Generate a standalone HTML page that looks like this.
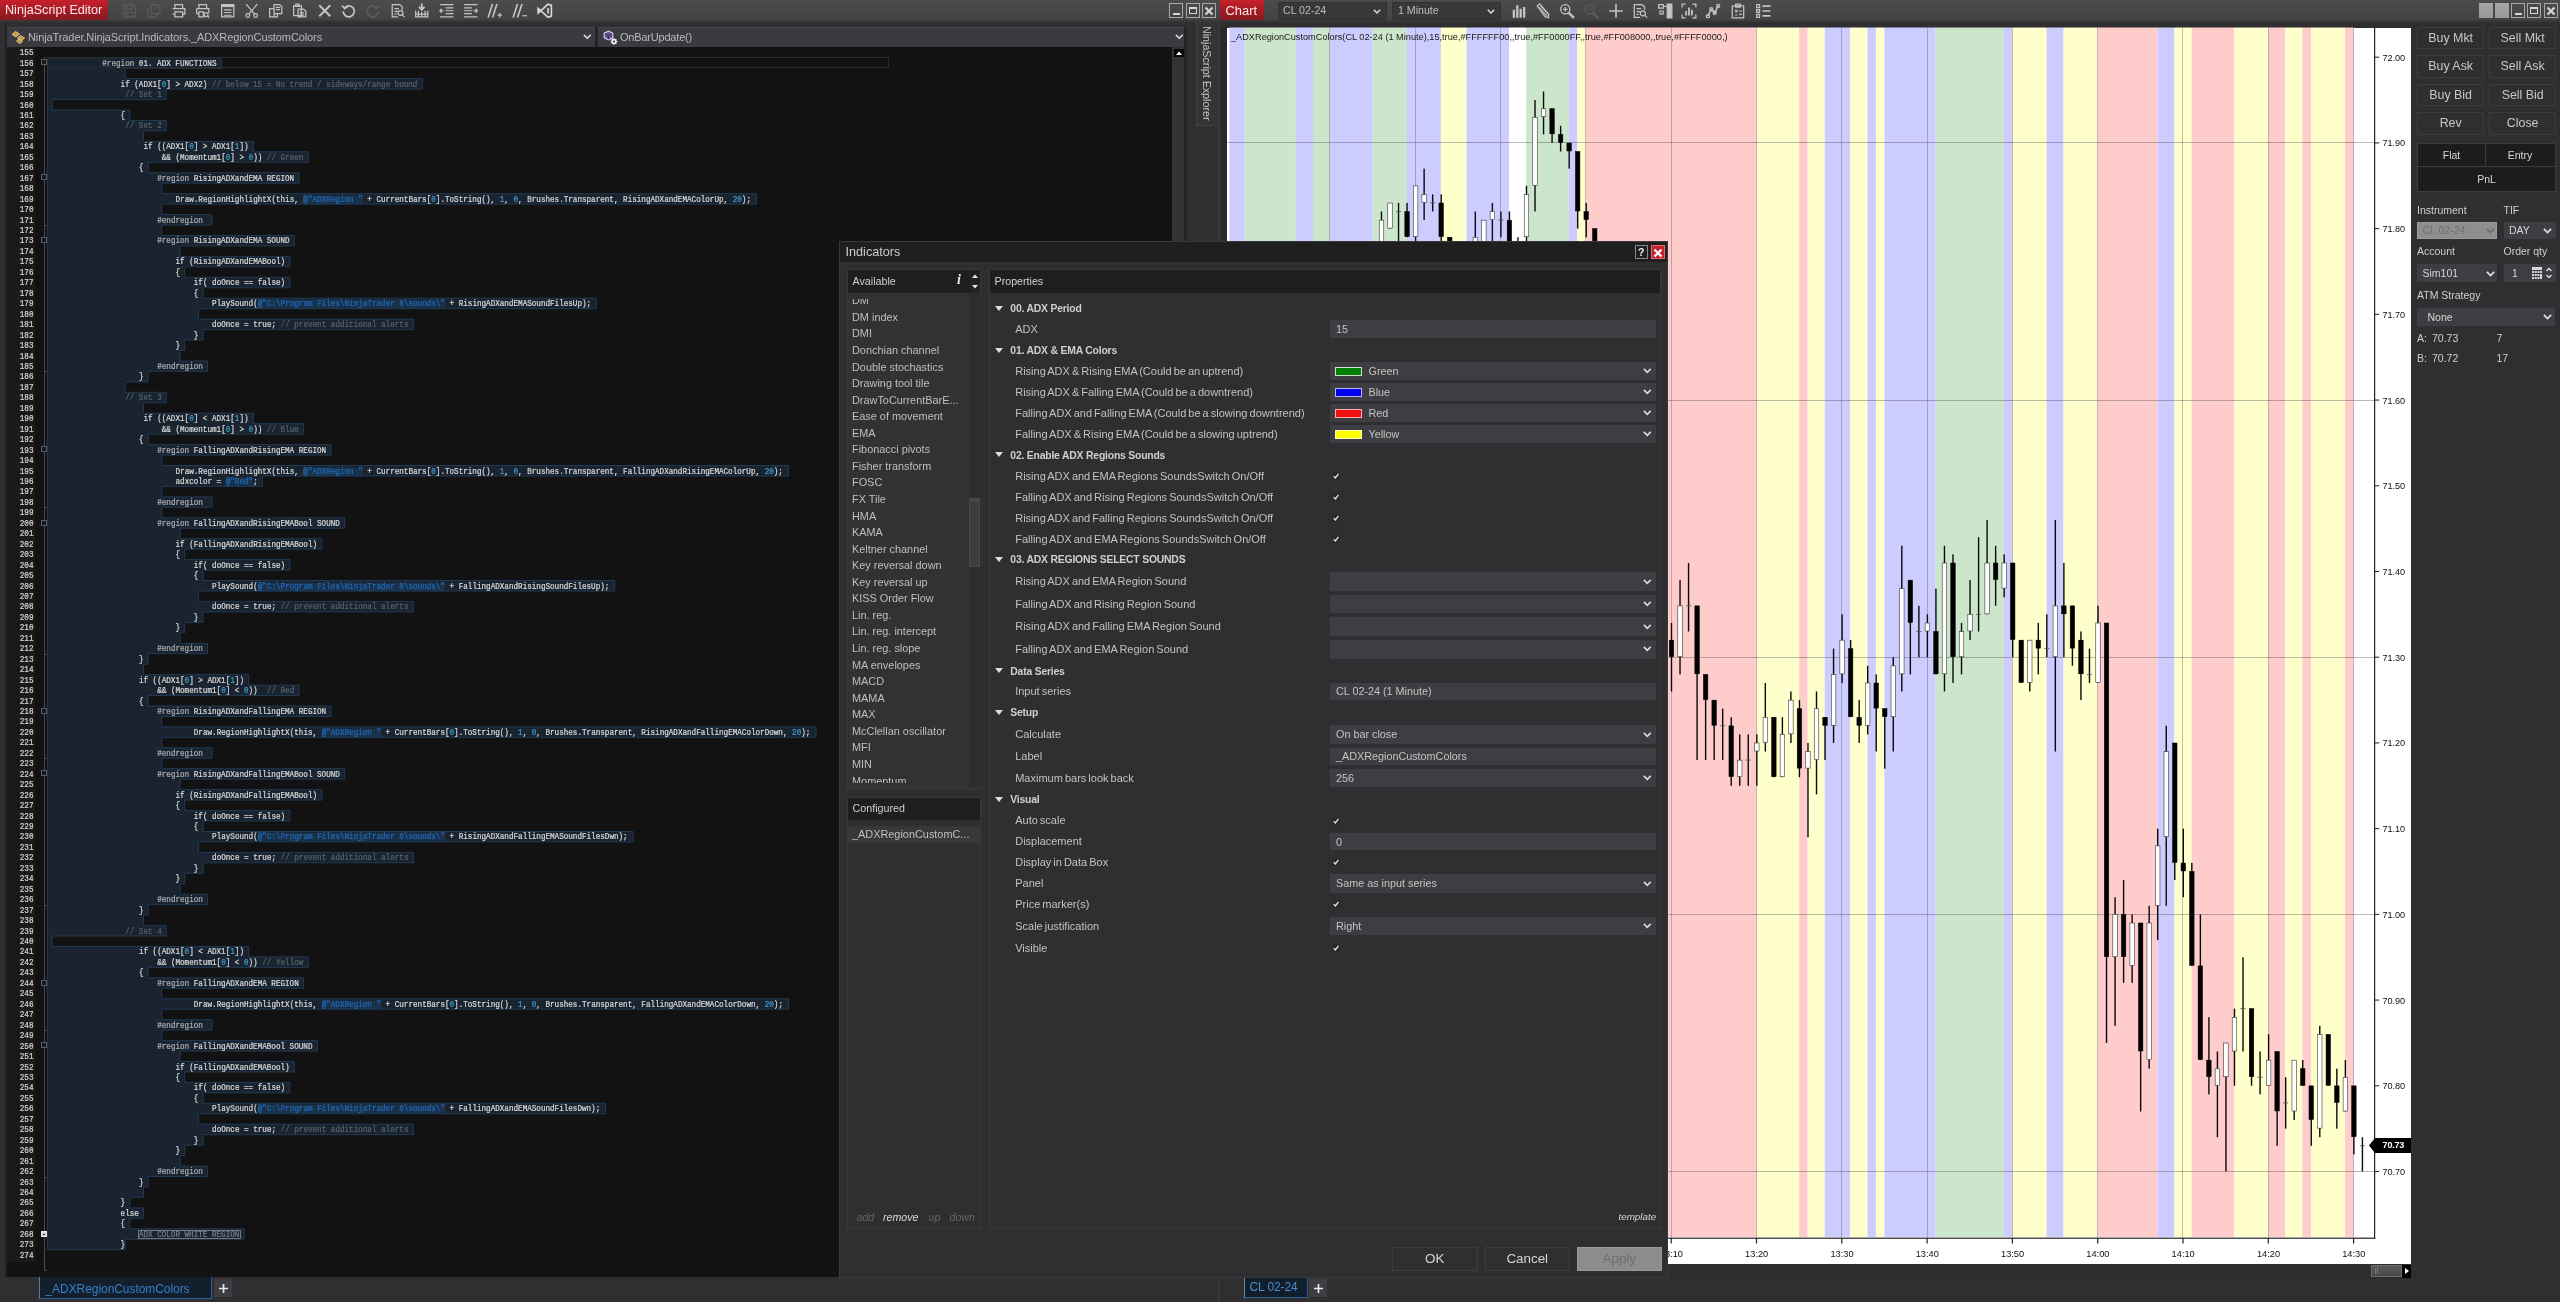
<!DOCTYPE html>
<html><head><meta charset="utf-8"><title>NinjaTrader</title><style>
*{box-sizing:border-box;margin:0;padding:0}
html,body{width:2560px;height:1302px;overflow:hidden;background:#2f2f32}
body{position:relative;font-family:"Liberation Sans",sans-serif;font-size:11px;color:#ccc}
div{position:absolute}
#root{left:0;top:0;width:2560px;height:1302px;will-change:transform;overflow:hidden}
.t{white-space:pre}
svg{position:absolute;overflow:visible}
.code{font-family:"Liberation Mono",monospace;white-space:pre}
.cl{transform:scaleY(1.1);transform-origin:0 50%;-webkit-text-stroke:0.22px currentColor}
</style></head><body>
<div id="root">
<div style="left:0px;top:0px;width:1220px;height:20px;background:linear-gradient(#4c4c4e,#434345);"></div>
<div style="left:0px;top:20px;width:1220px;height:2px;background:#38383a;"></div>
<div style="left:0px;top:22px;width:1220px;height:6px;background:#2f2f32;"></div>
<div style="left:0px;top:0px;width:108px;height:20px;background:linear-gradient(#c8202b,#a81c25 45%,#861922);"></div>
<div class="t" style="left:5px;top:2.00px;height:17px;line-height:17px;font-size:12.6px;color:#ffe9ea;">NinjaScript Editor</div>
<svg style="left:122.25px;top:2.75px" width="15.5" height="15.5" viewBox="0 0 14 14" fill="none" stroke="#5c5c5f" stroke-width="1.1"><path d="M2 1.5h8l2 2v9H2z M4 1.5v4h5v-4 M4 12.5v-4h6v4"/></svg>
<svg style="left:146.25px;top:2.75px" width="15.5" height="15.5" viewBox="0 0 14 14" fill="none" stroke="#5c5c5f" stroke-width="1.1"><path d="M4.5 1.5h6l2 2v6h-8z M1.5 5v7.5h8V10"/></svg>
<svg style="left:171.25px;top:2.75px" width="15.5" height="15.5" viewBox="0 0 14 14" fill="none" stroke="#c4c4c4" stroke-width="1.1"><path d="M3.5 5V1.5h7V5 M1.5 5h11v5h-2 M3.5 10h-2 M3.5 8h7v4.5h-7z"/></svg>
<svg style="left:195.25px;top:2.75px" width="15.5" height="15.5" viewBox="0 0 14 14" fill="none" stroke="#c4c4c4" stroke-width="1.1"><path d="M3.5 5V1.5h7V5 M1.5 5h11v4 M3.5 9.5h-2V5 M3.5 8h4v4.5h-4z"/><circle cx="10" cy="10.5" r="1.8"/><path d="M11.3 11.8l1.5 1.5"/></svg>
<svg style="left:220.25px;top:2.75px" width="15.5" height="15.5" viewBox="0 0 14 14" fill="none" stroke="#c4c4c4" stroke-width="1.1"><path d="M1.5 1.5h11v11h-11z"/><path d="M1.5 2.7h11" stroke-width="2"/><path d="M3.6 6.2h6.800 M3.600 8.600h6.800 M3.600 11h6.800" stroke-width=".95"/></svg>
<svg style="left:244.25px;top:2.75px" width="15.5" height="15.5" viewBox="0 0 14 14" fill="none" stroke="#c4c4c4" stroke-width="1.1"><path d="M2 1l7.5 9 M12 1L4.5 10"/><circle cx="3.5" cy="11.3" r="1.7"/><circle cx="10.5" cy="11.3" r="1.7"/></svg>
<svg style="left:268.25px;top:2.75px" width="15.5" height="15.5" viewBox="0 0 14 14" fill="none" stroke="#c4c4c4" stroke-width="1.1"><path d="M5.5 1.5h5l2 2v6h-7z M1.5 5h4v7.5h-4z M1.5 12.5h7v-3 M7 4h4 M7 6h4"/></svg>
<svg style="left:292.25px;top:2.75px" width="15.5" height="15.5" viewBox="0 0 14 14" fill="none" stroke="#c4c4c4" stroke-width="1.1"><path d="M1.5 2.5h7v9h-7z M3.5 1h3v2h-3z M5.5 5.5h5l2 2v5h-7z M7 9h4 M7 11h4"/></svg>
<svg style="left:317.25px;top:2.75px" width="15.5" height="15.5" viewBox="0 0 14 14" fill="none" stroke="#c4c4c4" stroke-width="1.1"><path d="M2 2l10 10 M12 2L2 12" stroke-width="1.8"/></svg>
<svg style="left:341.25px;top:2.75px" width="15.5" height="15.5" viewBox="0 0 14 14" fill="none" stroke="#c4c4c4" stroke-width="1.1"><path d="M3 4.5A5 5 0 1 1 2 7.5" stroke-width="1.6"/><path d="M0.8 2.2L3.3 5.2 6 3.2" stroke-width="1.4"/></svg>
<svg style="left:365.25px;top:2.75px" width="15.5" height="15.5" viewBox="0 0 14 14" fill="none" stroke="#5c5c5f" stroke-width="1.1"><path d="M11 4.5A5 5 0 1 0 12 7.5" stroke-width="1.6"/><path d="M13.2 2.2L10.7 5.2 8 3.2" stroke-width="1.4"/></svg>
<svg style="left:390.25px;top:2.75px" width="15.5" height="15.5" viewBox="0 0 14 14" fill="none" stroke="#c4c4c4" stroke-width="1.1"><path d="M9 1.5H2v11h5 M9 1.5l2 2V6 M4 5h4 M4 7.5h3 M4 10h2"/><circle cx="9.5" cy="9" r="2.2"/><path d="M11.2 10.8l2 2"/></svg>
<svg style="left:414.25px;top:2.75px" width="15.5" height="15.5" viewBox="0 0 14 14" fill="none" stroke="#c4c4c4" stroke-width="1.1"><path d="M7 0.5v5 M4.5 3.5L7 6l2.5-2.5" stroke-width="1.6"/><path d="M1.5 7v5.5h11V7 M4 7v5.5 M7 8v4.5 M10 7v5.5 M1.5 10h11"/></svg>
<svg style="left:439.25px;top:2.75px" width="15.5" height="15.5" viewBox="0 0 14 14" fill="none" stroke="#c4c4c4" stroke-width="1.1"><path d="M1 1.5h12 M6 4.5h7 M6 7h7 M6 9.5h7 M1 12.5h12 M4.5 7H1 M2.5 5.2L.8 7l1.7 1.8"/></svg>
<svg style="left:463.25px;top:2.75px" width="15.5" height="15.5" viewBox="0 0 14 14" fill="none" stroke="#c4c4c4" stroke-width="1.1"><path d="M1 1.5h12 M1 4.5h7 M1 7h7 M1 9.5h7 M1 12.5h12 M9 7h4 M11.3 5.2L13 7l-1.7 1.8"/></svg>
<svg style="left:487.25px;top:2.75px" width="15.5" height="15.5" viewBox="0 0 14 14" fill="none" stroke="#c4c4c4" stroke-width="1.1"><path d="M5 1L1 13 M9 1L5 13" stroke-width="1.5"/><path d="M9.5 11h4 M11.5 9v4" stroke-width="1.1"/></svg>
<svg style="left:512.25px;top:2.75px" width="15.5" height="15.5" viewBox="0 0 14 14" fill="none" stroke="#c4c4c4" stroke-width="1.1"><path d="M5 1L1 13 M9 1L5 13" stroke-width="1.5"/><path d="M9.5 11.5h4" stroke-width="1.1"/></svg>
<svg style="left:537.25px;top:2.75px" width="15.5" height="15.5" viewBox="0 0 14 14" fill="none" stroke="#d8d8d8" stroke-width="1.1"><path d="M10 1L3.5 7 10 13l3-1.2V2.2z M3.5 7L1 5v4z M10 4.5v5" stroke-width="1.5"/></svg>
<div style="left:1169px;top:3px;width:14px;height:15px;border:1px solid #a8a8aa;"><div style="left:3px;top:9px;width:7px;height:2px;background:#d6d6d6"></div></div>
<div style="left:1185.5px;top:3px;width:14px;height:15px;border:1px solid #a8a8aa;"><div style="left:2px;top:3px;width:8px;height:7px;border:1px solid #d6d6d6;border-top-width:2px"></div></div>
<div style="left:1202px;top:3px;width:14px;height:15px;border:1px solid #a8a8aa;"><svg style="left:2px;top:3px" width="8" height="8" viewBox="0 0 8 8"><path d="M.5 .5l7 7M7.5 .5l-7 7" stroke="#d6d6d6" stroke-width="2.2"/></svg></div>
<div style="left:5px;top:27.3px;width:589.5px;height:19.4px;background:#3b3b3f;border-top:1px solid #46464a"></div>
<div style="left:598px;top:27.3px;width:588px;height:19.4px;background:#3b3b3f;border-top:1px solid #46464a"></div>
<div style="left:594.5px;top:27.3px;width:3.5px;height:19.4px;background:#252528;"></div>
<div class="t" style="left:28px;top:30.10px;height:15px;line-height:15px;font-size:11px;color:#b8b8ba;letter-spacing:-0.1px">NinjaTrader.NinjaScript.Indicators._ADXRegionCustomColors</div>
<div class="t" style="left:620px;top:30.10px;height:15px;line-height:15px;font-size:11px;color:#b8b8ba;letter-spacing:-0.2px">OnBarUpdate()</div>
<svg style="left:582.5px;top:34.3px" width="8.5" height="5.5" viewBox="0 0 10 6.5" fill="none" stroke="#d8d8d8" stroke-width="1.9"><path d="M1 1l4 4 4-4"/></svg>
<svg style="left:1174.5px;top:34.3px" width="8.5" height="5.5" viewBox="0 0 10 6.5" fill="none" stroke="#d8d8d8" stroke-width="1.9"><path d="M1 1l4 4 4-4"/></svg>
<svg style="left:11px;top:30px" width="15" height="15" viewBox="0 0 15 15"><path d="M1 4.5l3.5-3 4 2.5-3.5 3z" fill="#c9973a" stroke="#f0d9a0" stroke-width=".8"/><path d="M6.5 8l3-2.5 4 2.5-3 2.5z" fill="#c9973a" stroke="#f0d9a0" stroke-width=".8"/><path d="M5.5 11l2.5-2 3.5 2.2-2.5 2.3z" fill="#c9973a" stroke="#f0d9a0" stroke-width=".8"/></svg>
<svg style="left:603px;top:29.5px" width="15" height="15" viewBox="0 0 15 15"><path d="M5.5 1l4.3 2.2v4.6L5.5 10 1.200 7.800V3.200z" fill="#66509a" stroke="#dccdf2" stroke-width="1.1"/><path d="M5.500 5.600V9.300M5.500 5.600L2 3.800M5.500 5.600L9 3.800" stroke="#3a2d5c" stroke-width=".9" fill="none"/><path d="M11 7.800l.9 1.300 1.600-.1-.1 1.600 1.300.9-1.300.9.1 1.600-1.600-.1-.9 1.300-.9-1.300-1.600.1.100-1.600-1.300-.9 1.300-.9-.1-1.600 1.600.1z" fill="#ececec"/><circle cx="11" cy="11.500" r="1.100" fill="#3b3b3f"/></svg>
<div style="left:6.9px;top:46.7px;width:1165.1px;height:1230.3px;background:#121212;"></div>
<div style="left:6.9px;top:46.7px;width:28.1px;height:1215.1px;background:#1a1a1a;"></div>
<div style="left:43.5px;top:57px;width:1px;height:1195px;background:#484b4e;"></div>
<div style="left:1172px;top:46.7px;width:12.3px;height:1230.3px;background:#333335;"></div>
<div style="left:1184.3px;top:27px;width:2.6px;height:1250px;background:#242426;"></div>
<div style="left:4.6px;top:22px;width:2.3px;height:1258px;background:#222224;"></div>
<div style="left:1173.5px;top:48.5px;width:10.5px;height:8px;background:#050505;"></div>
<svg style="left:1176px;top:50.5px" width="6" height="4" viewBox="0 0 6 4"><path d="M0 4L3 .5 6 4z" fill="#fff"/></svg>
<div style="left:1196.4px;top:22px;width:23.2px;height:103.6px;background:#343437;border:1px solid #414145;border-top:none"></div>
<div class="t" style="left:1206.5px;top:26px;font-size:10.7px;color:#c8c8c8;transform-origin:0 0;transform:rotate(90deg) translate(0,-50%);line-height:14px;height:14px">NinjaScript Explorer</div>
<svg style="left:0;top:0" width="1172" height="1280"><polygon points="47.4,57.7 221.2,57.7 221.2,68.2 125.2,68.2 125.2,78.6 422.6,78.6 422.6,89.1 166.3,89.1 166.3,99.6 52.0,99.6 52.0,110.0 129.8,110.0 129.8,120.5 166.3,120.5 166.3,130.9 143.5,130.9 143.5,141.4 253.3,141.4 253.3,151.8 308.2,151.8 308.2,162.3 148.1,162.3 148.1,172.7 299.0,172.7 299.0,183.2 161.8,183.2 161.8,193.7 756.5,193.7 756.5,204.1 161.8,204.1 161.8,214.6 212.1,214.6 212.1,225.0 161.8,225.0 161.8,235.5 294.4,235.5 294.4,245.9 180.1,245.9 180.1,256.4 289.9,256.4 289.9,266.8 184.7,266.8 184.7,277.3 289.9,277.3 289.9,287.8 203.0,287.8 203.0,298.2 596.4,298.2 596.4,308.7 198.4,308.7 198.4,319.1 413.4,319.1 413.4,329.6 203.0,329.6 203.0,340.0 184.7,340.0 184.7,350.5 180.1,350.5 180.1,361.0 207.5,361.0 207.5,371.4 148.1,371.4 148.1,381.9 125.2,381.9 125.2,392.3 166.3,392.3 166.3,402.8 143.5,402.8 143.5,413.2 253.3,413.2 253.3,423.7 303.6,423.7 303.6,434.1 148.1,434.1 148.1,444.6 331.1,444.6 331.1,455.1 161.8,455.1 161.8,465.5 788.5,465.5 788.5,476.0 262.4,476.0 262.4,486.4 161.8,486.4 161.8,496.9 212.1,496.9 212.1,507.3 161.8,507.3 161.8,517.8 344.8,517.8 344.8,528.2 180.1,528.2 180.1,538.7 321.9,538.7 321.9,549.2 184.7,549.2 184.7,559.6 289.9,559.6 289.9,570.1 203.0,570.1 203.0,580.5 614.7,580.5 614.7,591.0 198.4,591.0 198.4,601.4 413.4,601.4 413.4,611.9 203.0,611.9 203.0,622.4 184.7,622.4 184.7,632.8 180.1,632.8 180.1,643.3 207.5,643.3 207.5,653.7 148.1,653.7 148.1,664.2 143.5,664.2 143.5,674.6 248.7,674.6 248.7,685.1 299.0,685.1 299.0,695.5 148.1,695.5 148.1,706.0 331.1,706.0 331.1,716.5 161.8,716.5 161.8,726.9 816.0,726.9 816.0,737.4 161.8,737.4 161.8,747.8 212.1,747.8 212.1,758.3 161.8,758.3 161.8,768.7 344.8,768.7 344.8,779.2 180.1,779.2 180.1,789.6 321.9,789.6 321.9,800.1 184.7,800.1 184.7,810.6 289.9,810.6 289.9,821.0 203.0,821.0 203.0,831.5 633.0,831.5 633.0,841.9 198.4,841.9 198.4,852.4 413.4,852.4 413.4,862.8 203.0,862.8 203.0,873.3 184.7,873.3 184.7,883.8 180.1,883.8 180.1,894.2 207.5,894.2 207.5,904.7 148.1,904.7 148.1,915.1 143.5,915.1 143.5,925.6 166.3,925.6 166.3,936.0 52.0,936.0 52.0,946.5 248.7,946.5 248.7,956.9 308.2,956.9 308.2,967.4 148.1,967.4 148.1,977.9 303.6,977.9 303.6,988.3 161.8,988.3 161.8,998.8 788.5,998.8 788.5,1009.2 161.8,1009.2 161.8,1019.7 212.1,1019.7 212.1,1030.1 161.8,1030.1 161.8,1040.6 317.3,1040.6 317.3,1051.0 180.1,1051.0 180.1,1061.5 294.4,1061.5 294.4,1072.0 184.7,1072.0 184.7,1082.4 289.9,1082.4 289.9,1092.9 203.0,1092.9 203.0,1103.3 605.5,1103.3 605.5,1113.8 198.4,1113.8 198.4,1124.2 413.4,1124.2 413.4,1134.7 203.0,1134.7 203.0,1145.2 184.7,1145.2 184.7,1155.6 180.1,1155.6 180.1,1166.1 207.5,1166.1 207.5,1176.5 148.1,1176.5 148.1,1187.0 143.5,1187.0 143.5,1197.4 129.8,1197.4 129.8,1207.9 143.5,1207.9 143.5,1218.3 129.8,1218.3 129.8,1228.8 244.1,1228.8 244.1,1239.3 125.2,1239.3 125.2,1249.7 47.4,1249.7" fill="#1a2430" stroke="#213a53" stroke-width="1"/></svg>
<div style="left:47px;top:57.428000000000004px;width:842px;height:10.456px;border:1px solid #2b2d31"></div>
<div class="code cl" style="left:5px;top:48.27px;width:28.5px;height:10.456px;line-height:10.456px;font-size:7.62px;color:#d2d2d2;text-align:right">155</div>
<div class="code cl" style="left:5px;top:58.73px;width:28.5px;height:10.456px;line-height:10.456px;font-size:7.62px;color:#d2d2d2;text-align:right">156</div>
<div class="code cl" style="left:102.30px;top:58.73px;height:10.456px;line-height:10.456px;font-size:7.62px;color:#d6d6d6"><span style="color:#a9adb2">#region</span> 01. ADX FUNCTIONS</div>
<div class="code cl" style="left:5px;top:69.18px;width:28.5px;height:10.456px;line-height:10.456px;font-size:7.62px;color:#d2d2d2;text-align:right">157</div>
<div class="code cl" style="left:5px;top:79.64px;width:28.5px;height:10.456px;line-height:10.456px;font-size:7.62px;color:#d2d2d2;text-align:right">158</div>
<div class="code cl" style="left:120.60px;top:79.64px;height:10.456px;line-height:10.456px;font-size:7.62px;color:#d6d6d6">if (ADX1[<span style="color:#3e9bcb">0</span>] &gt; ADX2) <span style="color:#56616b">// below 15 = No trend / sideways/range bound</span></div>
<div class="code cl" style="left:5px;top:90.10px;width:28.5px;height:10.456px;line-height:10.456px;font-size:7.62px;color:#d2d2d2;text-align:right">159</div>
<div class="code cl" style="left:125.18px;top:90.10px;height:10.456px;line-height:10.456px;font-size:7.62px;color:#d6d6d6"><span style="color:#56616b">// Set 1</span></div>
<div class="code cl" style="left:5px;top:100.55px;width:28.5px;height:10.456px;line-height:10.456px;font-size:7.62px;color:#d2d2d2;text-align:right">160</div>
<div class="code cl" style="left:5px;top:111.01px;width:28.5px;height:10.456px;line-height:10.456px;font-size:7.62px;color:#d2d2d2;text-align:right">161</div>
<div class="code cl" style="left:120.60px;top:111.01px;height:10.456px;line-height:10.456px;font-size:7.62px;color:#d6d6d6">{</div>
<div class="code cl" style="left:5px;top:121.46px;width:28.5px;height:10.456px;line-height:10.456px;font-size:7.62px;color:#d2d2d2;text-align:right">162</div>
<div class="code cl" style="left:125.18px;top:121.46px;height:10.456px;line-height:10.456px;font-size:7.62px;color:#d6d6d6"><span style="color:#56616b">// Set 2</span></div>
<div class="code cl" style="left:5px;top:131.92px;width:28.5px;height:10.456px;line-height:10.456px;font-size:7.62px;color:#d2d2d2;text-align:right">163</div>
<div class="code cl" style="left:5px;top:142.38px;width:28.5px;height:10.456px;line-height:10.456px;font-size:7.62px;color:#d2d2d2;text-align:right">164</div>
<div class="code cl" style="left:143.47px;top:142.38px;height:10.456px;line-height:10.456px;font-size:7.62px;color:#d6d6d6">if ((ADX1[<span style="color:#3e9bcb">0</span>] &gt; ADX1[<span style="color:#3e9bcb">1</span>])</div>
<div class="code cl" style="left:5px;top:152.83px;width:28.5px;height:10.456px;line-height:10.456px;font-size:7.62px;color:#d2d2d2;text-align:right">165</div>
<div class="code cl" style="left:161.78px;top:152.83px;height:10.456px;line-height:10.456px;font-size:7.62px;color:#d6d6d6">&amp;&amp; (Momentum1[<span style="color:#3e9bcb">0</span>] &gt; <span style="color:#3e9bcb">0</span>)) <span style="color:#56616b">// Green</span></div>
<div class="code cl" style="left:5px;top:163.29px;width:28.5px;height:10.456px;line-height:10.456px;font-size:7.62px;color:#d2d2d2;text-align:right">166</div>
<div class="code cl" style="left:138.90px;top:163.29px;height:10.456px;line-height:10.456px;font-size:7.62px;color:#d6d6d6">{</div>
<div class="code cl" style="left:5px;top:173.74px;width:28.5px;height:10.456px;line-height:10.456px;font-size:7.62px;color:#d2d2d2;text-align:right">167</div>
<div class="code cl" style="left:157.20px;top:173.74px;height:10.456px;line-height:10.456px;font-size:7.62px;color:#d6d6d6"><span style="color:#a9adb2">#region</span> RisingADXandEMA REGION</div>
<div class="code cl" style="left:5px;top:184.20px;width:28.5px;height:10.456px;line-height:10.456px;font-size:7.62px;color:#d2d2d2;text-align:right">168</div>
<div class="code cl" style="left:5px;top:194.66px;width:28.5px;height:10.456px;line-height:10.456px;font-size:7.62px;color:#d2d2d2;text-align:right">169</div>
<div class="code cl" style="left:175.50px;top:194.66px;height:10.456px;line-height:10.456px;font-size:7.62px;color:#d6d6d6">Draw.RegionHighlightX(this, <span style="color:#2168b2;background:rgba(24,70,118,.4)">@&quot;ADXRegion &quot;</span> + CurrentBars[<span style="color:#3e9bcb">0</span>].ToString(), <span style="color:#3e9bcb">1</span>, <span style="color:#3e9bcb">0</span>, Brushes.Transparent, RisingADXandEMAColorUp, <span style="color:#3e9bcb">20</span>);</div>
<div class="code cl" style="left:5px;top:205.11px;width:28.5px;height:10.456px;line-height:10.456px;font-size:7.62px;color:#d2d2d2;text-align:right">170</div>
<div class="code cl" style="left:5px;top:215.57px;width:28.5px;height:10.456px;line-height:10.456px;font-size:7.62px;color:#d2d2d2;text-align:right">171</div>
<div class="code cl" style="left:157.20px;top:215.57px;height:10.456px;line-height:10.456px;font-size:7.62px;color:#d6d6d6"><span style="color:#a9adb2">#endregion</span> </div>
<div class="code cl" style="left:5px;top:226.02px;width:28.5px;height:10.456px;line-height:10.456px;font-size:7.62px;color:#d2d2d2;text-align:right">172</div>
<div class="code cl" style="left:5px;top:236.48px;width:28.5px;height:10.456px;line-height:10.456px;font-size:7.62px;color:#d2d2d2;text-align:right">173</div>
<div class="code cl" style="left:157.20px;top:236.48px;height:10.456px;line-height:10.456px;font-size:7.62px;color:#d6d6d6"><span style="color:#a9adb2">#region</span> RisingADXandEMA SOUND</div>
<div class="code cl" style="left:5px;top:246.94px;width:28.5px;height:10.456px;line-height:10.456px;font-size:7.62px;color:#d2d2d2;text-align:right">174</div>
<div class="code cl" style="left:5px;top:257.39px;width:28.5px;height:10.456px;line-height:10.456px;font-size:7.62px;color:#d2d2d2;text-align:right">175</div>
<div class="code cl" style="left:175.50px;top:257.39px;height:10.456px;line-height:10.456px;font-size:7.62px;color:#d6d6d6">if (RisingADXandEMABool)</div>
<div class="code cl" style="left:5px;top:267.85px;width:28.5px;height:10.456px;line-height:10.456px;font-size:7.62px;color:#d2d2d2;text-align:right">176</div>
<div class="code cl" style="left:175.50px;top:267.85px;height:10.456px;line-height:10.456px;font-size:7.62px;color:#d6d6d6">{</div>
<div class="code cl" style="left:5px;top:278.30px;width:28.5px;height:10.456px;line-height:10.456px;font-size:7.62px;color:#d2d2d2;text-align:right">177</div>
<div class="code cl" style="left:193.80px;top:278.30px;height:10.456px;line-height:10.456px;font-size:7.62px;color:#d6d6d6">if( doOnce == false)</div>
<div class="code cl" style="left:5px;top:288.76px;width:28.5px;height:10.456px;line-height:10.456px;font-size:7.62px;color:#d2d2d2;text-align:right">178</div>
<div class="code cl" style="left:193.80px;top:288.76px;height:10.456px;line-height:10.456px;font-size:7.62px;color:#d6d6d6">{</div>
<div class="code cl" style="left:5px;top:299.22px;width:28.5px;height:10.456px;line-height:10.456px;font-size:7.62px;color:#d2d2d2;text-align:right">179</div>
<div class="code cl" style="left:212.10px;top:299.22px;height:10.456px;line-height:10.456px;font-size:7.62px;color:#d6d6d6">PlaySound(<span style="color:#2168b2;background:rgba(24,70,118,.4)">@&quot;C:\Program Files\NinjaTrader 8\sounds\&quot;</span> + RisingADXandEMASoundFilesUp);</div>
<div class="code cl" style="left:5px;top:309.67px;width:28.5px;height:10.456px;line-height:10.456px;font-size:7.62px;color:#d2d2d2;text-align:right">180</div>
<div class="code cl" style="left:5px;top:320.13px;width:28.5px;height:10.456px;line-height:10.456px;font-size:7.62px;color:#d2d2d2;text-align:right">181</div>
<div class="code cl" style="left:212.10px;top:320.13px;height:10.456px;line-height:10.456px;font-size:7.62px;color:#d6d6d6">doOnce = true; <span style="color:#56616b">// prevent additional alerts</span></div>
<div class="code cl" style="left:5px;top:330.58px;width:28.5px;height:10.456px;line-height:10.456px;font-size:7.62px;color:#d2d2d2;text-align:right">182</div>
<div class="code cl" style="left:193.80px;top:330.58px;height:10.456px;line-height:10.456px;font-size:7.62px;color:#d6d6d6">}</div>
<div class="code cl" style="left:5px;top:341.04px;width:28.5px;height:10.456px;line-height:10.456px;font-size:7.62px;color:#d2d2d2;text-align:right">183</div>
<div class="code cl" style="left:175.50px;top:341.04px;height:10.456px;line-height:10.456px;font-size:7.62px;color:#d6d6d6">}</div>
<div class="code cl" style="left:5px;top:351.50px;width:28.5px;height:10.456px;line-height:10.456px;font-size:7.62px;color:#d2d2d2;text-align:right">184</div>
<div class="code cl" style="left:5px;top:361.95px;width:28.5px;height:10.456px;line-height:10.456px;font-size:7.62px;color:#d2d2d2;text-align:right">185</div>
<div class="code cl" style="left:157.20px;top:361.95px;height:10.456px;line-height:10.456px;font-size:7.62px;color:#d6d6d6"><span style="color:#a9adb2">#endregion</span></div>
<div class="code cl" style="left:5px;top:372.41px;width:28.5px;height:10.456px;line-height:10.456px;font-size:7.62px;color:#d2d2d2;text-align:right">186</div>
<div class="code cl" style="left:138.90px;top:372.41px;height:10.456px;line-height:10.456px;font-size:7.62px;color:#d6d6d6">}</div>
<div class="code cl" style="left:5px;top:382.86px;width:28.5px;height:10.456px;line-height:10.456px;font-size:7.62px;color:#d2d2d2;text-align:right">187</div>
<div class="code cl" style="left:5px;top:393.32px;width:28.5px;height:10.456px;line-height:10.456px;font-size:7.62px;color:#d2d2d2;text-align:right">188</div>
<div class="code cl" style="left:125.18px;top:393.32px;height:10.456px;line-height:10.456px;font-size:7.62px;color:#d6d6d6"><span style="color:#56616b">// Set 3</span></div>
<div class="code cl" style="left:5px;top:403.78px;width:28.5px;height:10.456px;line-height:10.456px;font-size:7.62px;color:#d2d2d2;text-align:right">189</div>
<div class="code cl" style="left:5px;top:414.23px;width:28.5px;height:10.456px;line-height:10.456px;font-size:7.62px;color:#d2d2d2;text-align:right">190</div>
<div class="code cl" style="left:143.47px;top:414.23px;height:10.456px;line-height:10.456px;font-size:7.62px;color:#d6d6d6">if ((ADX1[<span style="color:#3e9bcb">0</span>] &lt; ADX1[<span style="color:#3e9bcb">1</span>])</div>
<div class="code cl" style="left:5px;top:424.69px;width:28.5px;height:10.456px;line-height:10.456px;font-size:7.62px;color:#d2d2d2;text-align:right">191</div>
<div class="code cl" style="left:161.78px;top:424.69px;height:10.456px;line-height:10.456px;font-size:7.62px;color:#d6d6d6">&amp;&amp; (Momentum1[<span style="color:#3e9bcb">0</span>] &gt; <span style="color:#3e9bcb">0</span>)) <span style="color:#56616b">// Blue</span></div>
<div class="code cl" style="left:5px;top:435.14px;width:28.5px;height:10.456px;line-height:10.456px;font-size:7.62px;color:#d2d2d2;text-align:right">192</div>
<div class="code cl" style="left:138.90px;top:435.14px;height:10.456px;line-height:10.456px;font-size:7.62px;color:#d6d6d6">{</div>
<div class="code cl" style="left:5px;top:445.60px;width:28.5px;height:10.456px;line-height:10.456px;font-size:7.62px;color:#d2d2d2;text-align:right">193</div>
<div class="code cl" style="left:157.20px;top:445.60px;height:10.456px;line-height:10.456px;font-size:7.62px;color:#d6d6d6"><span style="color:#a9adb2">#region</span> FallingADXandRisingEMA REGION</div>
<div class="code cl" style="left:5px;top:456.06px;width:28.5px;height:10.456px;line-height:10.456px;font-size:7.62px;color:#d2d2d2;text-align:right">194</div>
<div class="code cl" style="left:5px;top:466.51px;width:28.5px;height:10.456px;line-height:10.456px;font-size:7.62px;color:#d2d2d2;text-align:right">195</div>
<div class="code cl" style="left:175.50px;top:466.51px;height:10.456px;line-height:10.456px;font-size:7.62px;color:#d6d6d6">Draw.RegionHighlightX(this, <span style="color:#2168b2;background:rgba(24,70,118,.4)">@&quot;ADXRegion &quot;</span> + CurrentBars[<span style="color:#3e9bcb">0</span>].ToString(), <span style="color:#3e9bcb">1</span>, <span style="color:#3e9bcb">0</span>, Brushes.Transparent, FallingADXandRisingEMAColorUp, <span style="color:#3e9bcb">20</span>);</div>
<div class="code cl" style="left:5px;top:476.97px;width:28.5px;height:10.456px;line-height:10.456px;font-size:7.62px;color:#d2d2d2;text-align:right">196</div>
<div class="code cl" style="left:175.50px;top:476.97px;height:10.456px;line-height:10.456px;font-size:7.62px;color:#d6d6d6">adxcolor = <span style="color:#2168b2;background:rgba(24,70,118,.4)">@&quot;Red&quot;</span>;</div>
<div class="code cl" style="left:5px;top:487.42px;width:28.5px;height:10.456px;line-height:10.456px;font-size:7.62px;color:#d2d2d2;text-align:right">197</div>
<div class="code cl" style="left:5px;top:497.88px;width:28.5px;height:10.456px;line-height:10.456px;font-size:7.62px;color:#d2d2d2;text-align:right">198</div>
<div class="code cl" style="left:157.20px;top:497.88px;height:10.456px;line-height:10.456px;font-size:7.62px;color:#d6d6d6"><span style="color:#a9adb2">#endregion</span> </div>
<div class="code cl" style="left:5px;top:508.34px;width:28.5px;height:10.456px;line-height:10.456px;font-size:7.62px;color:#d2d2d2;text-align:right">199</div>
<div class="code cl" style="left:5px;top:518.79px;width:28.5px;height:10.456px;line-height:10.456px;font-size:7.62px;color:#d2d2d2;text-align:right">200</div>
<div class="code cl" style="left:157.20px;top:518.79px;height:10.456px;line-height:10.456px;font-size:7.62px;color:#d6d6d6"><span style="color:#a9adb2">#region</span> FallingADXandRisingEMABool SOUND</div>
<div class="code cl" style="left:5px;top:529.25px;width:28.5px;height:10.456px;line-height:10.456px;font-size:7.62px;color:#d2d2d2;text-align:right">201</div>
<div class="code cl" style="left:5px;top:539.70px;width:28.5px;height:10.456px;line-height:10.456px;font-size:7.62px;color:#d2d2d2;text-align:right">202</div>
<div class="code cl" style="left:175.50px;top:539.70px;height:10.456px;line-height:10.456px;font-size:7.62px;color:#d6d6d6">if (FallingADXandRisingEMABool)</div>
<div class="code cl" style="left:5px;top:550.16px;width:28.5px;height:10.456px;line-height:10.456px;font-size:7.62px;color:#d2d2d2;text-align:right">203</div>
<div class="code cl" style="left:175.50px;top:550.16px;height:10.456px;line-height:10.456px;font-size:7.62px;color:#d6d6d6">{</div>
<div class="code cl" style="left:5px;top:560.62px;width:28.5px;height:10.456px;line-height:10.456px;font-size:7.62px;color:#d2d2d2;text-align:right">204</div>
<div class="code cl" style="left:193.80px;top:560.62px;height:10.456px;line-height:10.456px;font-size:7.62px;color:#d6d6d6">if( doOnce == false)</div>
<div class="code cl" style="left:5px;top:571.07px;width:28.5px;height:10.456px;line-height:10.456px;font-size:7.62px;color:#d2d2d2;text-align:right">205</div>
<div class="code cl" style="left:193.80px;top:571.07px;height:10.456px;line-height:10.456px;font-size:7.62px;color:#d6d6d6">{</div>
<div class="code cl" style="left:5px;top:581.53px;width:28.5px;height:10.456px;line-height:10.456px;font-size:7.62px;color:#d2d2d2;text-align:right">206</div>
<div class="code cl" style="left:212.10px;top:581.53px;height:10.456px;line-height:10.456px;font-size:7.62px;color:#d6d6d6">PlaySound(<span style="color:#2168b2;background:rgba(24,70,118,.4)">@&quot;C:\Program Files\NinjaTrader 8\sounds\&quot;</span> + FallingADXandRisingSoundFilesUp);</div>
<div class="code cl" style="left:5px;top:591.98px;width:28.5px;height:10.456px;line-height:10.456px;font-size:7.62px;color:#d2d2d2;text-align:right">207</div>
<div class="code cl" style="left:5px;top:602.44px;width:28.5px;height:10.456px;line-height:10.456px;font-size:7.62px;color:#d2d2d2;text-align:right">208</div>
<div class="code cl" style="left:212.10px;top:602.44px;height:10.456px;line-height:10.456px;font-size:7.62px;color:#d6d6d6">doOnce = true; <span style="color:#56616b">// prevent additional alerts</span></div>
<div class="code cl" style="left:5px;top:612.90px;width:28.5px;height:10.456px;line-height:10.456px;font-size:7.62px;color:#d2d2d2;text-align:right">209</div>
<div class="code cl" style="left:193.80px;top:612.90px;height:10.456px;line-height:10.456px;font-size:7.62px;color:#d6d6d6">}</div>
<div class="code cl" style="left:5px;top:623.35px;width:28.5px;height:10.456px;line-height:10.456px;font-size:7.62px;color:#d2d2d2;text-align:right">210</div>
<div class="code cl" style="left:175.50px;top:623.35px;height:10.456px;line-height:10.456px;font-size:7.62px;color:#d6d6d6">}</div>
<div class="code cl" style="left:5px;top:633.81px;width:28.5px;height:10.456px;line-height:10.456px;font-size:7.62px;color:#d2d2d2;text-align:right">211</div>
<div class="code cl" style="left:5px;top:644.26px;width:28.5px;height:10.456px;line-height:10.456px;font-size:7.62px;color:#d2d2d2;text-align:right">212</div>
<div class="code cl" style="left:157.20px;top:644.26px;height:10.456px;line-height:10.456px;font-size:7.62px;color:#d6d6d6"><span style="color:#a9adb2">#endregion</span></div>
<div class="code cl" style="left:5px;top:654.72px;width:28.5px;height:10.456px;line-height:10.456px;font-size:7.62px;color:#d2d2d2;text-align:right">213</div>
<div class="code cl" style="left:138.90px;top:654.72px;height:10.456px;line-height:10.456px;font-size:7.62px;color:#d6d6d6">}</div>
<div class="code cl" style="left:5px;top:665.18px;width:28.5px;height:10.456px;line-height:10.456px;font-size:7.62px;color:#d2d2d2;text-align:right">214</div>
<div class="code cl" style="left:5px;top:675.63px;width:28.5px;height:10.456px;line-height:10.456px;font-size:7.62px;color:#d2d2d2;text-align:right">215</div>
<div class="code cl" style="left:138.90px;top:675.63px;height:10.456px;line-height:10.456px;font-size:7.62px;color:#d6d6d6">if ((ADX1[<span style="color:#3e9bcb">0</span>] &gt; ADX1[<span style="color:#3e9bcb">1</span>])</div>
<div class="code cl" style="left:5px;top:686.09px;width:28.5px;height:10.456px;line-height:10.456px;font-size:7.62px;color:#d2d2d2;text-align:right">216</div>
<div class="code cl" style="left:157.20px;top:686.09px;height:10.456px;line-height:10.456px;font-size:7.62px;color:#d6d6d6">&amp;&amp; (Momentum1[<span style="color:#3e9bcb">0</span>] &lt; <span style="color:#3e9bcb">0</span>))  <span style="color:#56616b">// Red</span></div>
<div class="code cl" style="left:5px;top:696.54px;width:28.5px;height:10.456px;line-height:10.456px;font-size:7.62px;color:#d2d2d2;text-align:right">217</div>
<div class="code cl" style="left:138.90px;top:696.54px;height:10.456px;line-height:10.456px;font-size:7.62px;color:#d6d6d6">{</div>
<div class="code cl" style="left:5px;top:707.00px;width:28.5px;height:10.456px;line-height:10.456px;font-size:7.62px;color:#d2d2d2;text-align:right">218</div>
<div class="code cl" style="left:157.20px;top:707.00px;height:10.456px;line-height:10.456px;font-size:7.62px;color:#d6d6d6"><span style="color:#a9adb2">#region</span> RisingADXandFallingEMA REGION</div>
<div class="code cl" style="left:5px;top:717.46px;width:28.5px;height:10.456px;line-height:10.456px;font-size:7.62px;color:#d2d2d2;text-align:right">219</div>
<div class="code cl" style="left:5px;top:727.91px;width:28.5px;height:10.456px;line-height:10.456px;font-size:7.62px;color:#d2d2d2;text-align:right">220</div>
<div class="code cl" style="left:193.80px;top:727.91px;height:10.456px;line-height:10.456px;font-size:7.62px;color:#d6d6d6">Draw.RegionHighlightX(this, <span style="color:#2168b2;background:rgba(24,70,118,.4)">@&quot;ADXRegion &quot;</span> + CurrentBars[<span style="color:#3e9bcb">0</span>].ToString(), <span style="color:#3e9bcb">1</span>, <span style="color:#3e9bcb">0</span>, Brushes.Transparent, RisingADXandFallingEMAColorDown, <span style="color:#3e9bcb">20</span>);</div>
<div class="code cl" style="left:5px;top:738.37px;width:28.5px;height:10.456px;line-height:10.456px;font-size:7.62px;color:#d2d2d2;text-align:right">221</div>
<div class="code cl" style="left:5px;top:748.82px;width:28.5px;height:10.456px;line-height:10.456px;font-size:7.62px;color:#d2d2d2;text-align:right">222</div>
<div class="code cl" style="left:157.20px;top:748.82px;height:10.456px;line-height:10.456px;font-size:7.62px;color:#d6d6d6"><span style="color:#a9adb2">#endregion</span> </div>
<div class="code cl" style="left:5px;top:759.28px;width:28.5px;height:10.456px;line-height:10.456px;font-size:7.62px;color:#d2d2d2;text-align:right">223</div>
<div class="code cl" style="left:5px;top:769.74px;width:28.5px;height:10.456px;line-height:10.456px;font-size:7.62px;color:#d2d2d2;text-align:right">224</div>
<div class="code cl" style="left:157.20px;top:769.74px;height:10.456px;line-height:10.456px;font-size:7.62px;color:#d6d6d6"><span style="color:#a9adb2">#region</span> RisingADXandFallingEMABool SOUND</div>
<div class="code cl" style="left:5px;top:780.19px;width:28.5px;height:10.456px;line-height:10.456px;font-size:7.62px;color:#d2d2d2;text-align:right">225</div>
<div class="code cl" style="left:5px;top:790.65px;width:28.5px;height:10.456px;line-height:10.456px;font-size:7.62px;color:#d2d2d2;text-align:right">226</div>
<div class="code cl" style="left:175.50px;top:790.65px;height:10.456px;line-height:10.456px;font-size:7.62px;color:#d6d6d6">if (RisingADXandFallingEMABool)</div>
<div class="code cl" style="left:5px;top:801.10px;width:28.5px;height:10.456px;line-height:10.456px;font-size:7.62px;color:#d2d2d2;text-align:right">227</div>
<div class="code cl" style="left:175.50px;top:801.10px;height:10.456px;line-height:10.456px;font-size:7.62px;color:#d6d6d6">{</div>
<div class="code cl" style="left:5px;top:811.56px;width:28.5px;height:10.456px;line-height:10.456px;font-size:7.62px;color:#d2d2d2;text-align:right">228</div>
<div class="code cl" style="left:193.80px;top:811.56px;height:10.456px;line-height:10.456px;font-size:7.62px;color:#d6d6d6">if( doOnce == false)</div>
<div class="code cl" style="left:5px;top:822.02px;width:28.5px;height:10.456px;line-height:10.456px;font-size:7.62px;color:#d2d2d2;text-align:right">229</div>
<div class="code cl" style="left:193.80px;top:822.02px;height:10.456px;line-height:10.456px;font-size:7.62px;color:#d6d6d6">{</div>
<div class="code cl" style="left:5px;top:832.47px;width:28.5px;height:10.456px;line-height:10.456px;font-size:7.62px;color:#d2d2d2;text-align:right">230</div>
<div class="code cl" style="left:212.10px;top:832.47px;height:10.456px;line-height:10.456px;font-size:7.62px;color:#d6d6d6">PlaySound(<span style="color:#2168b2;background:rgba(24,70,118,.4)">@&quot;C:\Program Files\NinjaTrader 8\sounds\&quot;</span> + RisingADXandFallingEMASoundFilesDwn);</div>
<div class="code cl" style="left:5px;top:842.93px;width:28.5px;height:10.456px;line-height:10.456px;font-size:7.62px;color:#d2d2d2;text-align:right">231</div>
<div class="code cl" style="left:5px;top:853.38px;width:28.5px;height:10.456px;line-height:10.456px;font-size:7.62px;color:#d2d2d2;text-align:right">232</div>
<div class="code cl" style="left:212.10px;top:853.38px;height:10.456px;line-height:10.456px;font-size:7.62px;color:#d6d6d6">doOnce = true; <span style="color:#56616b">// prevent additional alerts</span></div>
<div class="code cl" style="left:5px;top:863.84px;width:28.5px;height:10.456px;line-height:10.456px;font-size:7.62px;color:#d2d2d2;text-align:right">233</div>
<div class="code cl" style="left:193.80px;top:863.84px;height:10.456px;line-height:10.456px;font-size:7.62px;color:#d6d6d6">}</div>
<div class="code cl" style="left:5px;top:874.30px;width:28.5px;height:10.456px;line-height:10.456px;font-size:7.62px;color:#d2d2d2;text-align:right">234</div>
<div class="code cl" style="left:175.50px;top:874.30px;height:10.456px;line-height:10.456px;font-size:7.62px;color:#d6d6d6">}</div>
<div class="code cl" style="left:5px;top:884.75px;width:28.5px;height:10.456px;line-height:10.456px;font-size:7.62px;color:#d2d2d2;text-align:right">235</div>
<div class="code cl" style="left:5px;top:895.21px;width:28.5px;height:10.456px;line-height:10.456px;font-size:7.62px;color:#d2d2d2;text-align:right">236</div>
<div class="code cl" style="left:157.20px;top:895.21px;height:10.456px;line-height:10.456px;font-size:7.62px;color:#d6d6d6"><span style="color:#a9adb2">#endregion</span></div>
<div class="code cl" style="left:5px;top:905.66px;width:28.5px;height:10.456px;line-height:10.456px;font-size:7.62px;color:#d2d2d2;text-align:right">237</div>
<div class="code cl" style="left:138.90px;top:905.66px;height:10.456px;line-height:10.456px;font-size:7.62px;color:#d6d6d6">}</div>
<div class="code cl" style="left:5px;top:916.12px;width:28.5px;height:10.456px;line-height:10.456px;font-size:7.62px;color:#d2d2d2;text-align:right">238</div>
<div class="code cl" style="left:5px;top:926.58px;width:28.5px;height:10.456px;line-height:10.456px;font-size:7.62px;color:#d2d2d2;text-align:right">239</div>
<div class="code cl" style="left:125.18px;top:926.58px;height:10.456px;line-height:10.456px;font-size:7.62px;color:#d6d6d6"><span style="color:#56616b">// Set 4</span></div>
<div class="code cl" style="left:5px;top:937.03px;width:28.5px;height:10.456px;line-height:10.456px;font-size:7.62px;color:#d2d2d2;text-align:right">240</div>
<div class="code cl" style="left:5px;top:947.49px;width:28.5px;height:10.456px;line-height:10.456px;font-size:7.62px;color:#d2d2d2;text-align:right">241</div>
<div class="code cl" style="left:138.90px;top:947.49px;height:10.456px;line-height:10.456px;font-size:7.62px;color:#d6d6d6">if ((ADX1[<span style="color:#3e9bcb">0</span>] &lt; ADX1[<span style="color:#3e9bcb">1</span>])</div>
<div class="code cl" style="left:5px;top:957.94px;width:28.5px;height:10.456px;line-height:10.456px;font-size:7.62px;color:#d2d2d2;text-align:right">242</div>
<div class="code cl" style="left:157.20px;top:957.94px;height:10.456px;line-height:10.456px;font-size:7.62px;color:#d6d6d6">&amp;&amp; (Momentum1[<span style="color:#3e9bcb">0</span>] &lt; <span style="color:#3e9bcb">0</span>)) <span style="color:#56616b">// Yellow</span></div>
<div class="code cl" style="left:5px;top:968.40px;width:28.5px;height:10.456px;line-height:10.456px;font-size:7.62px;color:#d2d2d2;text-align:right">243</div>
<div class="code cl" style="left:138.90px;top:968.40px;height:10.456px;line-height:10.456px;font-size:7.62px;color:#d6d6d6">{</div>
<div class="code cl" style="left:5px;top:978.86px;width:28.5px;height:10.456px;line-height:10.456px;font-size:7.62px;color:#d2d2d2;text-align:right">244</div>
<div class="code cl" style="left:157.20px;top:978.86px;height:10.456px;line-height:10.456px;font-size:7.62px;color:#d6d6d6"><span style="color:#a9adb2">#region</span> FallingADXandEMA REGION</div>
<div class="code cl" style="left:5px;top:989.31px;width:28.5px;height:10.456px;line-height:10.456px;font-size:7.62px;color:#d2d2d2;text-align:right">245</div>
<div class="code cl" style="left:5px;top:999.77px;width:28.5px;height:10.456px;line-height:10.456px;font-size:7.62px;color:#d2d2d2;text-align:right">246</div>
<div class="code cl" style="left:193.80px;top:999.77px;height:10.456px;line-height:10.456px;font-size:7.62px;color:#d6d6d6">Draw.RegionHighlightX(this, <span style="color:#2168b2;background:rgba(24,70,118,.4)">@&quot;ADXRegion &quot;</span> + CurrentBars[<span style="color:#3e9bcb">0</span>].ToString(), <span style="color:#3e9bcb">1</span>, <span style="color:#3e9bcb">0</span>, Brushes.Transparent, FallingADXandEMAColorDown, <span style="color:#3e9bcb">20</span>);</div>
<div class="code cl" style="left:5px;top:1010.22px;width:28.5px;height:10.456px;line-height:10.456px;font-size:7.62px;color:#d2d2d2;text-align:right">247</div>
<div class="code cl" style="left:5px;top:1020.68px;width:28.5px;height:10.456px;line-height:10.456px;font-size:7.62px;color:#d2d2d2;text-align:right">248</div>
<div class="code cl" style="left:157.20px;top:1020.68px;height:10.456px;line-height:10.456px;font-size:7.62px;color:#d6d6d6"><span style="color:#a9adb2">#endregion</span> </div>
<div class="code cl" style="left:5px;top:1031.14px;width:28.5px;height:10.456px;line-height:10.456px;font-size:7.62px;color:#d2d2d2;text-align:right">249</div>
<div class="code cl" style="left:5px;top:1041.59px;width:28.5px;height:10.456px;line-height:10.456px;font-size:7.62px;color:#d2d2d2;text-align:right">250</div>
<div class="code cl" style="left:157.20px;top:1041.59px;height:10.456px;line-height:10.456px;font-size:7.62px;color:#d6d6d6"><span style="color:#a9adb2">#region</span> FallingADXandEMABool SOUND</div>
<div class="code cl" style="left:5px;top:1052.05px;width:28.5px;height:10.456px;line-height:10.456px;font-size:7.62px;color:#d2d2d2;text-align:right">251</div>
<div class="code cl" style="left:5px;top:1062.50px;width:28.5px;height:10.456px;line-height:10.456px;font-size:7.62px;color:#d2d2d2;text-align:right">252</div>
<div class="code cl" style="left:175.50px;top:1062.50px;height:10.456px;line-height:10.456px;font-size:7.62px;color:#d6d6d6">if (FallingADXandEMABool)</div>
<div class="code cl" style="left:5px;top:1072.96px;width:28.5px;height:10.456px;line-height:10.456px;font-size:7.62px;color:#d2d2d2;text-align:right">253</div>
<div class="code cl" style="left:175.50px;top:1072.96px;height:10.456px;line-height:10.456px;font-size:7.62px;color:#d6d6d6">{</div>
<div class="code cl" style="left:5px;top:1083.42px;width:28.5px;height:10.456px;line-height:10.456px;font-size:7.62px;color:#d2d2d2;text-align:right">254</div>
<div class="code cl" style="left:193.80px;top:1083.42px;height:10.456px;line-height:10.456px;font-size:7.62px;color:#d6d6d6">if( doOnce == false)</div>
<div class="code cl" style="left:5px;top:1093.87px;width:28.5px;height:10.456px;line-height:10.456px;font-size:7.62px;color:#d2d2d2;text-align:right">255</div>
<div class="code cl" style="left:193.80px;top:1093.87px;height:10.456px;line-height:10.456px;font-size:7.62px;color:#d6d6d6">{</div>
<div class="code cl" style="left:5px;top:1104.33px;width:28.5px;height:10.456px;line-height:10.456px;font-size:7.62px;color:#d2d2d2;text-align:right">256</div>
<div class="code cl" style="left:212.10px;top:1104.33px;height:10.456px;line-height:10.456px;font-size:7.62px;color:#d6d6d6">PlaySound(<span style="color:#2168b2;background:rgba(24,70,118,.4)">@&quot;C:\Program Files\NinjaTrader 8\sounds\&quot;</span> + FallingADXandEMASoundFilesDwn);</div>
<div class="code cl" style="left:5px;top:1114.78px;width:28.5px;height:10.456px;line-height:10.456px;font-size:7.62px;color:#d2d2d2;text-align:right">257</div>
<div class="code cl" style="left:5px;top:1125.24px;width:28.5px;height:10.456px;line-height:10.456px;font-size:7.62px;color:#d2d2d2;text-align:right">258</div>
<div class="code cl" style="left:212.10px;top:1125.24px;height:10.456px;line-height:10.456px;font-size:7.62px;color:#d6d6d6">doOnce = true; <span style="color:#56616b">// prevent additional alerts</span></div>
<div class="code cl" style="left:5px;top:1135.70px;width:28.5px;height:10.456px;line-height:10.456px;font-size:7.62px;color:#d2d2d2;text-align:right">259</div>
<div class="code cl" style="left:193.80px;top:1135.70px;height:10.456px;line-height:10.456px;font-size:7.62px;color:#d6d6d6">}</div>
<div class="code cl" style="left:5px;top:1146.15px;width:28.5px;height:10.456px;line-height:10.456px;font-size:7.62px;color:#d2d2d2;text-align:right">260</div>
<div class="code cl" style="left:175.50px;top:1146.15px;height:10.456px;line-height:10.456px;font-size:7.62px;color:#d6d6d6">}</div>
<div class="code cl" style="left:5px;top:1156.61px;width:28.5px;height:10.456px;line-height:10.456px;font-size:7.62px;color:#d2d2d2;text-align:right">261</div>
<div class="code cl" style="left:5px;top:1167.06px;width:28.5px;height:10.456px;line-height:10.456px;font-size:7.62px;color:#d2d2d2;text-align:right">262</div>
<div class="code cl" style="left:157.20px;top:1167.06px;height:10.456px;line-height:10.456px;font-size:7.62px;color:#d6d6d6"><span style="color:#a9adb2">#endregion</span></div>
<div class="code cl" style="left:5px;top:1177.52px;width:28.5px;height:10.456px;line-height:10.456px;font-size:7.62px;color:#d2d2d2;text-align:right">263</div>
<div class="code cl" style="left:138.90px;top:1177.52px;height:10.456px;line-height:10.456px;font-size:7.62px;color:#d6d6d6">}</div>
<div class="code cl" style="left:5px;top:1187.98px;width:28.5px;height:10.456px;line-height:10.456px;font-size:7.62px;color:#d2d2d2;text-align:right">264</div>
<div class="code cl" style="left:5px;top:1198.43px;width:28.5px;height:10.456px;line-height:10.456px;font-size:7.62px;color:#d2d2d2;text-align:right">265</div>
<div class="code cl" style="left:120.60px;top:1198.43px;height:10.456px;line-height:10.456px;font-size:7.62px;color:#d6d6d6">}</div>
<div class="code cl" style="left:5px;top:1208.89px;width:28.5px;height:10.456px;line-height:10.456px;font-size:7.62px;color:#d2d2d2;text-align:right">266</div>
<div class="code cl" style="left:120.60px;top:1208.89px;height:10.456px;line-height:10.456px;font-size:7.62px;color:#d6d6d6">else</div>
<div class="code cl" style="left:5px;top:1219.34px;width:28.5px;height:10.456px;line-height:10.456px;font-size:7.62px;color:#d2d2d2;text-align:right">267</div>
<div class="code cl" style="left:120.60px;top:1219.34px;height:10.456px;line-height:10.456px;font-size:7.62px;color:#d6d6d6">{</div>
<div class="code cl" style="left:5px;top:1229.80px;width:28.5px;height:10.456px;line-height:10.456px;font-size:7.62px;color:#d2d2d2;text-align:right">268</div>
<div style="left:137.9px;top:1229.6px;width:102.65px;height:9.056px;border:1px solid #73787d"></div>
<div class="code cl" style="left:138.90px;top:1229.80px;height:10.456px;line-height:10.456px;font-size:7.62px;color:#777c82">ADX COLOR WHITE REGION</div>
<div class="code cl" style="left:5px;top:1240.26px;width:28.5px;height:10.456px;line-height:10.456px;font-size:7.62px;color:#d2d2d2;text-align:right">273</div>
<div class="code cl" style="left:120.60px;top:1240.26px;height:10.456px;line-height:10.456px;font-size:7.62px;color:#d6d6d6">}</div>
<div class="code cl" style="left:5px;top:1250.71px;width:28.5px;height:10.456px;line-height:10.456px;font-size:7.62px;color:#d2d2d2;text-align:right">274</div>
<div style="left:40.5px;top:59.456px;width:6px;height:6px;background:#17181a;border:1px solid #5a5d60"></div>
<div style="left:40.5px;top:174.47199999999998px;width:6px;height:6px;background:#17181a;border:1px solid #5a5d60"></div>
<div style="left:43.5px;top:225.024px;width:3px;height:1px;background:#484b4e;"></div>
<div style="left:40.5px;top:237.208px;width:6px;height:6px;background:#17181a;border:1px solid #5a5d60"></div>
<div style="left:43.5px;top:371.40799999999996px;width:3px;height:1px;background:#484b4e;"></div>
<div style="left:40.5px;top:446.328px;width:6px;height:6px;background:#17181a;border:1px solid #5a5d60"></div>
<div style="left:43.5px;top:507.33599999999996px;width:3px;height:1px;background:#484b4e;"></div>
<div style="left:40.5px;top:519.52px;width:6px;height:6px;background:#17181a;border:1px solid #5a5d60"></div>
<div style="left:43.5px;top:653.72px;width:3px;height:1px;background:#484b4e;"></div>
<div style="left:40.5px;top:707.728px;width:6px;height:6px;background:#17181a;border:1px solid #5a5d60"></div>
<div style="left:43.5px;top:758.28px;width:3px;height:1px;background:#484b4e;"></div>
<div style="left:40.5px;top:770.4639999999999px;width:6px;height:6px;background:#17181a;border:1px solid #5a5d60"></div>
<div style="left:43.5px;top:904.664px;width:3px;height:1px;background:#484b4e;"></div>
<div style="left:40.5px;top:979.584px;width:6px;height:6px;background:#17181a;border:1px solid #5a5d60"></div>
<div style="left:43.5px;top:1030.136px;width:3px;height:1px;background:#484b4e;"></div>
<div style="left:40.5px;top:1042.32px;width:6px;height:6px;background:#17181a;border:1px solid #5a5d60"></div>
<div style="left:43.5px;top:1176.52px;width:3px;height:1px;background:#484b4e;"></div>
<div style="left:40.5px;top:1230.528px;width:6px;height:6px;background:#d8d8d8;border:1px solid #e8e8e8"><div style="left:1px;top:2px;width:2px;height:1px;background:#222;"></div></div>
<div style="left:43.5px;top:1270px;width:3.5px;height:1px;background:#484b4e;"></div>
<div style="left:43.5px;top:1252px;width:1px;height:19px;background:#484b4e;"></div>
<div style="left:0px;top:1277px;width:1220px;height:25px;background:#2f2f32;"></div>
<div style="left:39px;top:1277px;width:173px;height:21.5px;background:#131f2c;border:1px solid #2a6196;border-left-color:#5d7f9f;border-top:none"></div>
<div class="t" style="left:45.5px;top:1281.00px;height:16px;line-height:16px;font-size:11.9px;color:#3580c8;">_ADXRegionCustomColors</div>
<div style="left:214px;top:1279px;width:18px;height:18px;background:#3e3e42;"></div>
<svg style="left:218.5px;top:1283.5px" width="9" height="9" viewBox="0 0 9 9"><path d="M4.5 0v9M0 4.5h9" stroke="#e6e6e6" stroke-width="1.7"/></svg>
<div style="left:1220px;top:0px;width:1340px;height:20px;background:linear-gradient(#4c4c4e,#434345);"></div>
<div style="left:1220px;top:20px;width:1340px;height:2px;background:#38383a;"></div>
<div style="left:1220px;top:22px;width:1340px;height:5px;background:#2f2f32;"></div>
<div style="left:1218.2px;top:22px;width:2.3px;height:1280px;background:#38383b;"></div>
<div style="left:1220px;top:0px;width:44px;height:20px;background:linear-gradient(#c8202b,#a81c25 45%,#861922);"></div>
<div class="t" style="left:1225.5px;top:2.00px;height:17px;line-height:17px;font-size:12.9px;color:#ffe9ea;">Chart</div>
<div style="left:1278px;top:2px;width:108.5px;height:17.5px;background:#38383b;border:1px solid #323235"></div>
<div style="left:1391.5px;top:2px;width:109.5px;height:17.5px;background:#38383b;border:1px solid #323235"></div>
<div class="t" style="left:1283px;top:3.00px;height:15px;line-height:15px;font-size:10.6px;color:#bcbcbe;">CL 02-24</div>
<div class="t" style="left:1398px;top:3.00px;height:15px;line-height:15px;font-size:10.6px;color:#bcbcbe;">1 Minute</div>
<svg style="left:1373px;top:8.5px" width="8" height="5.2" viewBox="0 0 10 6.5" fill="none" stroke="#dcdcdc" stroke-width="1.9"><path d="M1 1l4 4 4-4"/></svg>
<svg style="left:1487px;top:8.5px" width="8" height="5.2" viewBox="0 0 10 6.5" fill="none" stroke="#dcdcdc" stroke-width="1.9"><path d="M1 1l4 4 4-4"/></svg>
<svg style="left:1510.5px;top:2.5px" width="16" height="16" viewBox="0 0 14 14" fill="none" stroke="#c4c4c4" stroke-width="1.1"><path d="M2.5 6v7 M5.5 2v11 M8.5 5v8 M11.5 3.5v9.5" stroke-width="2"/></svg>
<svg style="left:1535.0px;top:2.5px" width="16" height="16" viewBox="0 0 14 14" fill="none" stroke="#c4c4c4" stroke-width="1.1"><path d="M2 2.5L4 .8l8 9-.2 3-3-.8z" /><path d="M3.5 3.5l7 8 M5 2.5l7 8" stroke-width=".9"/></svg>
<svg style="left:1559.0px;top:2.5px" width="16" height="16" viewBox="0 0 14 14" fill="none" stroke="#c4c4c4" stroke-width="1.1"><circle cx="5.5" cy="5.5" r="4"/><path d="M8.5 8.5l4.5 4.5" stroke-width="2"/><path d="M3.5 5.5h4 M5.5 3.5v4" stroke-width="1.1"/></svg>
<svg style="left:1583.0px;top:2.5px" width="16" height="16" viewBox="0 0 14 14" fill="none" stroke="#5c5c5f" stroke-width="1.1"><circle cx="5.5" cy="5.5" r="4"/><path d="M8.5 8.5l4.5 4.5" stroke-width="2"/><path d="M3.5 5.5h4" stroke-width="1.1"/></svg>
<svg style="left:1607.5px;top:2.5px" width="16" height="16" viewBox="0 0 14 14" fill="none" stroke="#c4c4c4" stroke-width="1.1"><path d="M7 1v12 M1 7h12" stroke-width="1.4"/></svg>
<svg style="left:1632.0px;top:2.5px" width="16" height="16" viewBox="0 0 14 14" fill="none" stroke="#c4c4c4" stroke-width="1.1"><path d="M9 1.5H2v11h5 M9 1.5l2 2V6 M4 5h4 M4 7.5h3 M4 10h2"/><circle cx="9.5" cy="9" r="2.2"/><path d="M11.2 10.8l2 2"/></svg>
<svg style="left:1657.0px;top:2.5px" width="16" height="16" viewBox="0 0 14 14" fill="none" stroke="#c4c4c4" stroke-width="1.1"><path d="M1.5 1.5h4v3h-4z M5.5 3h3" /><path d="M9 1h4v12H9z" fill="#c4c4c4"/><path d="M2.5 7h3v2.5h-3z" stroke-width="1"/></svg>
<svg style="left:1680.5px;top:2.5px" width="16" height="16" viewBox="0 0 14 14" fill="none" stroke="#c4c4c4" stroke-width="1.1"><path d="M1 4V1h3 M10 1h3v3 M13 10v3h-3 M4 13H1v-3" /><path d="M4.5 7v4 M7 4v7 M9.5 6v5" stroke-width="1.6"/></svg>
<svg style="left:1705.0px;top:2.5px" width="16" height="16" viewBox="0 0 14 14" fill="none" stroke="#c4c4c4" stroke-width="1.1"><path d="M2.5 11.5l3-6 3 3 3-6" stroke-width="1.3"/><circle cx="2.5" cy="11.5" r="1.4"/><circle cx="5.5" cy="5.5" r="1.4"/><circle cx="8.5" cy="8.5" r="1.4"/><circle cx="11.5" cy="2.5" r="1.4"/></svg>
<svg style="left:1729.5px;top:2.5px" width="16" height="16" viewBox="0 0 14 14" fill="none" stroke="#c4c4c4" stroke-width="1.1"><path d="M2 2.5h10v10.500H2z M5 1h4v2.500H5z"/><path d="M4.500 6l2 2m0-2l-2 2 M8 10h2.500 M8 7h2.500 M4.500 10.500h2" stroke-width="1"/></svg>
<svg style="left:1754.5px;top:2.5px" width="16" height="16" viewBox="0 0 14 14" fill="none" stroke="#c4c4c4" stroke-width="1.1"><path d="M1.500 1.500h2.500v2.500h-2.500z M1.500 5.800h2.500v2.500h-2.500z M1.500 10h2.500v2.500h-2.500z" stroke-width="1.1"/><path d="M6.500 2.800h7 M6.500 7h7 M6.500 11.200h7" stroke-width="1.5"/></svg>
<div style="left:2479px;top:3px;width:13.7px;height:15px;background:linear-gradient(#a6a6a8,#98989a);"></div>
<div style="left:2495px;top:3px;width:13.5px;height:15px;background:linear-gradient(#a6a6a8,#98989a);"></div>
<div style="left:2510.5px;top:3px;width:14px;height:15px;border:1px solid #a8a8aa;"><div style="left:3px;top:9px;width:7px;height:2px;background:#d6d6d6"></div></div>
<div style="left:2527px;top:3px;width:14px;height:15px;border:1px solid #a8a8aa;"><div style="left:2px;top:3px;width:8px;height:7px;border:1px solid #d6d6d6;border-top-width:2px"></div></div>
<div style="left:2543.5px;top:3px;width:14px;height:15px;border:1px solid #a8a8aa;"><svg style="left:2px;top:3px" width="8" height="8" viewBox="0 0 8 8"><path d="M.5 .5l7 7M7.5 .5l-7 7" stroke="#d6d6d6" stroke-width="2.2"/></svg></div>
<div style="left:1226.5px;top:27.5px;width:1184.5px;height:1236.5px;background:#ffffff;"></div>
<div style="left:1220.5px;top:27px;width:6px;height:1250px;background:#29292b;"></div>
<svg style="left:0;top:0" width="2560" height="1302" shape-rendering="auto"><rect x="1229.40" y="27.5" width="15.30" height="1209.40" fill="#ccccff"/><rect x="1244.70" y="27.5" width="51.18" height="1209.40" fill="#cce6cc"/><rect x="1295.88" y="27.5" width="17.06" height="1209.40" fill="#ccccff"/><rect x="1312.94" y="27.5" width="17.06" height="1209.40" fill="#cce6cc"/><rect x="1330.00" y="27.5" width="42.65" height="1209.40" fill="#ccccff"/><rect x="1372.65" y="27.5" width="34.12" height="1209.40" fill="#cce6cc"/><rect x="1406.77" y="27.5" width="34.12" height="1209.40" fill="#ccccff"/><rect x="1440.89" y="27.5" width="25.59" height="1209.40" fill="#ffffcc"/><rect x="1466.48" y="27.5" width="42.65" height="1209.40" fill="#ccccff"/><rect x="1509.13" y="27.5" width="17.06" height="1209.40" fill="#ffffff"/><rect x="1526.19" y="27.5" width="42.65" height="1209.40" fill="#cce6cc"/><rect x="1568.84" y="27.5" width="8.53" height="1209.40" fill="#ccccff"/><rect x="1577.37" y="27.5" width="8.53" height="1209.40" fill="#ffffcc"/><rect x="1585.90" y="27.5" width="170.60" height="1209.40" fill="#ffcccc"/><rect x="1756.50" y="27.5" width="42.65" height="1209.40" fill="#ffffcc"/><rect x="1799.15" y="27.5" width="8.53" height="1209.40" fill="#ffcccc"/><rect x="1807.68" y="27.5" width="17.06" height="1209.40" fill="#ffffcc"/><rect x="1824.74" y="27.5" width="25.59" height="1209.40" fill="#ccccff"/><rect x="1850.33" y="27.5" width="17.06" height="1209.40" fill="#ffffcc"/><rect x="1867.39" y="27.5" width="8.53" height="1209.40" fill="#ccccff"/><rect x="1875.92" y="27.5" width="8.53" height="1209.40" fill="#ffffcc"/><rect x="1884.45" y="27.5" width="51.18" height="1209.40" fill="#ccccff"/><rect x="1935.63" y="27.5" width="68.24" height="1209.40" fill="#cce6cc"/><rect x="2003.87" y="27.5" width="8.53" height="1209.40" fill="#ccccff"/><rect x="2012.40" y="27.5" width="34.12" height="1209.40" fill="#ffffcc"/><rect x="2046.52" y="27.5" width="17.06" height="1209.40" fill="#ccccff"/><rect x="2063.58" y="27.5" width="34.12" height="1209.40" fill="#ffffcc"/><rect x="2097.70" y="27.5" width="59.71" height="1209.40" fill="#ffcccc"/><rect x="2157.41" y="27.5" width="17.06" height="1209.40" fill="#ccccff"/><rect x="2174.47" y="27.5" width="17.06" height="1209.40" fill="#ffffcc"/><rect x="2191.53" y="27.5" width="42.65" height="1209.40" fill="#ffcccc"/><rect x="2234.18" y="27.5" width="34.12" height="1209.40" fill="#ffffcc"/><rect x="2268.30" y="27.5" width="17.06" height="1209.40" fill="#ffcccc"/><rect x="2285.36" y="27.5" width="17.06" height="1209.40" fill="#ffffcc"/><rect x="2302.42" y="27.5" width="8.53" height="1209.40" fill="#ffcccc"/><rect x="2310.95" y="27.5" width="34.12" height="1209.40" fill="#ffffcc"/><rect x="2345.07" y="27.5" width="8.53" height="1209.40" fill="#ffcccc"/><rect x="1329" y="27.5" width="1" height="1210.70" fill="rgba(65,65,80,0.32)"/><rect x="1415" y="27.5" width="1" height="1210.70" fill="rgba(65,65,80,0.32)"/><rect x="1500" y="27.5" width="1" height="1210.70" fill="rgba(65,65,80,0.32)"/><rect x="1585" y="27.5" width="1" height="1210.70" fill="rgba(65,65,80,0.32)"/><rect x="1671" y="27.5" width="1" height="1210.70" fill="rgba(65,65,80,0.32)"/><rect x="1756" y="27.5" width="1" height="1210.70" fill="rgba(65,65,80,0.32)"/><rect x="1841" y="27.5" width="1" height="1210.70" fill="rgba(65,65,80,0.32)"/><rect x="1927" y="27.5" width="1" height="1210.70" fill="rgba(65,65,80,0.32)"/><rect x="2012" y="27.5" width="1" height="1210.70" fill="rgba(65,65,80,0.32)"/><rect x="2097" y="27.5" width="1" height="1210.70" fill="rgba(65,65,80,0.32)"/><rect x="2182" y="27.5" width="1" height="1210.70" fill="rgba(65,65,80,0.32)"/><rect x="2268" y="27.5" width="1" height="1210.70" fill="rgba(65,65,80,0.32)"/><rect x="2353" y="27.5" width="1" height="1210.70" fill="rgba(65,65,80,0.32)"/><rect x="1226.5" y="142" width="1148.10" height="1" fill="rgba(60,60,72,0.36)"/><rect x="1226.5" y="400" width="1148.10" height="1" fill="rgba(60,60,72,0.36)"/><rect x="1226.5" y="657" width="1148.10" height="1" fill="rgba(60,60,72,0.36)"/><rect x="1226.5" y="914" width="1148.10" height="1" fill="rgba(60,60,72,0.36)"/><rect x="1226.5" y="1171" width="1148.10" height="1" fill="rgba(60,60,72,0.36)"/><rect x="1380.78" y="211.49" width="1.4" height="68.57" fill="#0a0a0a"/><rect x="1379.23" y="220.16" width="4.5" height="42.26" fill="#ffffff" stroke="#3a3a3a" stroke-width="0.6"/><rect x="1389.31" y="202.92" width="1.4" height="25.71" fill="#0a0a0a"/><rect x="1387.76" y="203.02" width="4.5" height="25.11" fill="#ffffff" stroke="#3a3a3a" stroke-width="0.6"/><rect x="1397.84" y="202.92" width="1.4" height="60.00" fill="#0a0a0a"/><rect x="1395.94" y="211.09" width="5.2" height="0.8" fill="#555"/><rect x="1406.37" y="202.92" width="1.4" height="34.29" fill="#0a0a0a"/><rect x="1404.82" y="211.59" width="4.5" height="25.11" fill="#000000" stroke="#000" stroke-width="0.5"/><rect x="1414.90" y="185.77" width="1.4" height="68.57" fill="#0a0a0a"/><rect x="1413.35" y="185.87" width="4.5" height="50.83" fill="#ffffff" stroke="#3a3a3a" stroke-width="0.6"/><rect x="1423.43" y="168.63" width="1.4" height="51.43" fill="#0a0a0a"/><rect x="1421.88" y="194.44" width="4.5" height="7.97" fill="#ffffff" stroke="#3a3a3a" stroke-width="0.6"/><rect x="1431.96" y="194.34" width="1.4" height="17.14" fill="#0a0a0a"/><rect x="1430.06" y="202.52" width="5.2" height="0.8" fill="#555"/><rect x="1440.49" y="194.34" width="1.4" height="68.57" fill="#0a0a0a"/><rect x="1438.94" y="203.02" width="4.5" height="33.69" fill="#000000" stroke="#000" stroke-width="0.5"/><rect x="1449.02" y="237.20" width="1.4" height="42.86" fill="#0a0a0a"/><rect x="1447.47" y="237.30" width="4.5" height="33.69" fill="#000000" stroke="#000" stroke-width="0.5"/><rect x="1474.61" y="211.49" width="1.4" height="60.00" fill="#0a0a0a"/><rect x="1473.06" y="237.30" width="4.5" height="25.11" fill="#ffffff" stroke="#3a3a3a" stroke-width="0.6"/><rect x="1483.14" y="220.06" width="1.4" height="60.00" fill="#0a0a0a"/><rect x="1481.59" y="220.16" width="4.5" height="50.83" fill="#ffffff" stroke="#3a3a3a" stroke-width="0.6"/><rect x="1491.67" y="202.92" width="1.4" height="60.00" fill="#0a0a0a"/><rect x="1490.12" y="211.59" width="4.5" height="7.97" fill="#ffffff" stroke="#3a3a3a" stroke-width="0.6"/><rect x="1500.20" y="211.49" width="1.4" height="25.71" fill="#0a0a0a"/><rect x="1498.30" y="219.66" width="5.2" height="0.8" fill="#555"/><rect x="1508.73" y="211.49" width="1.4" height="68.57" fill="#0a0a0a"/><rect x="1507.18" y="220.16" width="4.5" height="50.83" fill="#000000" stroke="#000" stroke-width="0.5"/><rect x="1517.26" y="237.20" width="1.4" height="34.29" fill="#0a0a0a"/><rect x="1515.71" y="245.87" width="4.5" height="7.97" fill="#ffffff" stroke="#3a3a3a" stroke-width="0.6"/><rect x="1525.79" y="185.77" width="1.4" height="77.14" fill="#0a0a0a"/><rect x="1524.24" y="194.44" width="4.5" height="42.26" fill="#ffffff" stroke="#3a3a3a" stroke-width="0.6"/><rect x="1534.32" y="100.06" width="1.4" height="111.43" fill="#0a0a0a"/><rect x="1532.77" y="117.30" width="4.5" height="67.97" fill="#ffffff" stroke="#3a3a3a" stroke-width="0.6"/><rect x="1542.85" y="91.49" width="1.4" height="42.86" fill="#0a0a0a"/><rect x="1541.30" y="108.73" width="4.5" height="7.97" fill="#ffffff" stroke="#3a3a3a" stroke-width="0.6"/><rect x="1551.38" y="108.63" width="1.4" height="34.29" fill="#0a0a0a"/><rect x="1549.83" y="108.73" width="4.5" height="25.11" fill="#000000" stroke="#000" stroke-width="0.5"/><rect x="1559.91" y="125.77" width="1.4" height="25.71" fill="#0a0a0a"/><rect x="1558.36" y="134.44" width="4.5" height="7.97" fill="#000000" stroke="#000" stroke-width="0.5"/><rect x="1568.44" y="142.92" width="1.4" height="25.71" fill="#0a0a0a"/><rect x="1566.89" y="143.02" width="4.5" height="7.97" fill="#000000" stroke="#000" stroke-width="0.5"/><rect x="1576.97" y="151.49" width="1.4" height="77.14" fill="#0a0a0a"/><rect x="1575.42" y="151.59" width="4.5" height="59.40" fill="#000000" stroke="#000" stroke-width="0.5"/><rect x="1585.50" y="202.92" width="1.4" height="34.29" fill="#0a0a0a"/><rect x="1583.95" y="211.59" width="4.5" height="7.97" fill="#000000" stroke="#000" stroke-width="0.5"/><rect x="1594.03" y="228.63" width="1.4" height="85.71" fill="#0a0a0a"/><rect x="1592.48" y="228.73" width="4.5" height="67.97" fill="#000000" stroke="#000" stroke-width="0.5"/><rect x="1670.80" y="622.92" width="1.4" height="68.57" fill="#0a0a0a"/><rect x="1669.25" y="640.16" width="4.5" height="16.54" fill="#000000" stroke="#000" stroke-width="0.5"/><rect x="1679.33" y="580.06" width="1.4" height="94.29" fill="#0a0a0a"/><rect x="1677.78" y="605.88" width="4.5" height="50.83" fill="#ffffff" stroke="#3a3a3a" stroke-width="0.6"/><rect x="1687.86" y="562.92" width="1.4" height="68.57" fill="#0a0a0a"/><rect x="1685.96" y="605.38" width="5.2" height="0.8" fill="#555"/><rect x="1696.39" y="605.78" width="1.4" height="154.29" fill="#0a0a0a"/><rect x="1694.84" y="605.88" width="4.5" height="67.97" fill="#000000" stroke="#000" stroke-width="0.5"/><rect x="1704.92" y="674.35" width="1.4" height="85.72" fill="#0a0a0a"/><rect x="1703.37" y="674.45" width="4.5" height="25.11" fill="#000000" stroke="#000" stroke-width="0.5"/><rect x="1713.45" y="700.06" width="1.4" height="60.00" fill="#0a0a0a"/><rect x="1711.90" y="700.16" width="4.5" height="25.11" fill="#000000" stroke="#000" stroke-width="0.5"/><rect x="1721.98" y="708.63" width="1.4" height="51.43" fill="#0a0a0a"/><rect x="1720.08" y="725.38" width="5.2" height="0.8" fill="#555"/><rect x="1730.51" y="717.21" width="1.4" height="68.57" fill="#0a0a0a"/><rect x="1728.96" y="725.88" width="4.5" height="50.83" fill="#000000" stroke="#000" stroke-width="0.5"/><rect x="1739.04" y="734.35" width="1.4" height="51.43" fill="#0a0a0a"/><rect x="1737.49" y="760.16" width="4.5" height="16.54" fill="#ffffff" stroke="#3a3a3a" stroke-width="0.6"/><rect x="1747.57" y="734.35" width="1.4" height="51.43" fill="#0a0a0a"/><rect x="1745.67" y="759.66" width="5.2" height="0.8" fill="#555"/><rect x="1756.10" y="734.35" width="1.4" height="51.43" fill="#0a0a0a"/><rect x="1754.55" y="743.02" width="4.5" height="7.97" fill="#ffffff" stroke="#3a3a3a" stroke-width="0.6"/><rect x="1764.63" y="682.92" width="1.4" height="68.57" fill="#0a0a0a"/><rect x="1763.08" y="717.31" width="4.5" height="25.11" fill="#ffffff" stroke="#3a3a3a" stroke-width="0.6"/><rect x="1773.16" y="717.21" width="1.4" height="60.00" fill="#0a0a0a"/><rect x="1771.61" y="717.31" width="4.5" height="59.40" fill="#000000" stroke="#000" stroke-width="0.5"/><rect x="1781.69" y="717.21" width="1.4" height="60.00" fill="#0a0a0a"/><rect x="1780.14" y="734.45" width="4.5" height="42.26" fill="#ffffff" stroke="#3a3a3a" stroke-width="0.6"/><rect x="1790.22" y="691.49" width="1.4" height="51.43" fill="#0a0a0a"/><rect x="1788.67" y="700.16" width="4.5" height="33.69" fill="#ffffff" stroke="#3a3a3a" stroke-width="0.6"/><rect x="1798.75" y="700.06" width="1.4" height="77.14" fill="#0a0a0a"/><rect x="1797.20" y="708.73" width="4.5" height="59.40" fill="#000000" stroke="#000" stroke-width="0.5"/><rect x="1807.28" y="742.92" width="1.4" height="94.29" fill="#0a0a0a"/><rect x="1805.73" y="751.59" width="4.5" height="16.54" fill="#ffffff" stroke="#3a3a3a" stroke-width="0.6"/><rect x="1815.81" y="691.49" width="1.4" height="102.86" fill="#0a0a0a"/><rect x="1814.26" y="708.73" width="4.5" height="50.83" fill="#ffffff" stroke="#3a3a3a" stroke-width="0.6"/><rect x="1824.34" y="717.21" width="1.4" height="42.86" fill="#0a0a0a"/><rect x="1822.79" y="717.31" width="4.5" height="7.97" fill="#000000" stroke="#000" stroke-width="0.5"/><rect x="1832.87" y="648.63" width="1.4" height="94.29" fill="#0a0a0a"/><rect x="1831.32" y="674.45" width="4.5" height="50.83" fill="#ffffff" stroke="#3a3a3a" stroke-width="0.6"/><rect x="1841.40" y="614.35" width="1.4" height="68.57" fill="#0a0a0a"/><rect x="1839.85" y="640.16" width="4.5" height="33.69" fill="#ffffff" stroke="#3a3a3a" stroke-width="0.6"/><rect x="1849.93" y="640.06" width="1.4" height="77.14" fill="#0a0a0a"/><rect x="1848.38" y="648.73" width="4.5" height="67.97" fill="#000000" stroke="#000" stroke-width="0.5"/><rect x="1858.46" y="700.06" width="1.4" height="42.86" fill="#0a0a0a"/><rect x="1856.91" y="717.31" width="4.5" height="7.97" fill="#000000" stroke="#000" stroke-width="0.5"/><rect x="1866.99" y="665.78" width="1.4" height="68.57" fill="#0a0a0a"/><rect x="1865.44" y="683.02" width="4.5" height="42.26" fill="#ffffff" stroke="#3a3a3a" stroke-width="0.6"/><rect x="1875.52" y="674.35" width="1.4" height="77.14" fill="#0a0a0a"/><rect x="1873.97" y="683.02" width="4.5" height="25.11" fill="#000000" stroke="#000" stroke-width="0.5"/><rect x="1884.05" y="708.63" width="1.4" height="60.00" fill="#0a0a0a"/><rect x="1882.50" y="708.73" width="4.5" height="7.97" fill="#000000" stroke="#000" stroke-width="0.5"/><rect x="1892.58" y="657.21" width="1.4" height="94.29" fill="#0a0a0a"/><rect x="1891.03" y="665.88" width="4.5" height="50.83" fill="#ffffff" stroke="#3a3a3a" stroke-width="0.6"/><rect x="1901.11" y="545.78" width="1.4" height="145.72" fill="#0a0a0a"/><rect x="1899.56" y="588.73" width="4.5" height="85.12" fill="#ffffff" stroke="#3a3a3a" stroke-width="0.6"/><rect x="1909.64" y="580.06" width="1.4" height="94.29" fill="#0a0a0a"/><rect x="1908.09" y="580.16" width="4.5" height="42.26" fill="#000000" stroke="#000" stroke-width="0.5"/><rect x="1918.17" y="605.78" width="1.4" height="51.43" fill="#0a0a0a"/><rect x="1916.27" y="631.09" width="5.2" height="0.8" fill="#555"/><rect x="1926.70" y="614.35" width="1.4" height="42.86" fill="#0a0a0a"/><rect x="1925.15" y="623.02" width="4.5" height="7.97" fill="#ffffff" stroke="#3a3a3a" stroke-width="0.6"/><rect x="1935.23" y="588.63" width="1.4" height="85.72" fill="#0a0a0a"/><rect x="1933.68" y="631.59" width="4.5" height="42.26" fill="#000000" stroke="#000" stroke-width="0.5"/><rect x="1943.76" y="545.78" width="1.4" height="145.72" fill="#0a0a0a"/><rect x="1942.21" y="563.02" width="4.5" height="110.83" fill="#ffffff" stroke="#3a3a3a" stroke-width="0.6"/><rect x="1952.29" y="554.35" width="1.4" height="128.57" fill="#0a0a0a"/><rect x="1950.74" y="563.02" width="4.5" height="93.69" fill="#000000" stroke="#000" stroke-width="0.5"/><rect x="1960.82" y="622.92" width="1.4" height="51.43" fill="#0a0a0a"/><rect x="1959.27" y="631.59" width="4.5" height="25.11" fill="#ffffff" stroke="#3a3a3a" stroke-width="0.6"/><rect x="1969.35" y="580.06" width="1.4" height="60.00" fill="#0a0a0a"/><rect x="1967.80" y="614.45" width="4.5" height="16.54" fill="#ffffff" stroke="#3a3a3a" stroke-width="0.6"/><rect x="1977.88" y="537.20" width="1.4" height="94.29" fill="#0a0a0a"/><rect x="1975.98" y="613.95" width="5.2" height="0.8" fill="#555"/><rect x="1986.41" y="520.06" width="1.4" height="94.29" fill="#0a0a0a"/><rect x="1984.86" y="563.02" width="4.5" height="50.83" fill="#ffffff" stroke="#3a3a3a" stroke-width="0.6"/><rect x="1994.94" y="545.78" width="1.4" height="60.00" fill="#0a0a0a"/><rect x="1993.39" y="563.02" width="4.5" height="16.54" fill="#000000" stroke="#000" stroke-width="0.5"/><rect x="2003.47" y="554.35" width="1.4" height="42.86" fill="#0a0a0a"/><rect x="2001.92" y="563.02" width="4.5" height="25.11" fill="#ffffff" stroke="#3a3a3a" stroke-width="0.6"/><rect x="2012.00" y="562.92" width="1.4" height="94.29" fill="#0a0a0a"/><rect x="2010.45" y="563.02" width="4.5" height="76.54" fill="#000000" stroke="#000" stroke-width="0.5"/><rect x="2020.53" y="640.06" width="1.4" height="42.86" fill="#0a0a0a"/><rect x="2018.98" y="640.16" width="4.5" height="42.26" fill="#000000" stroke="#000" stroke-width="0.5"/><rect x="2029.06" y="640.06" width="1.4" height="51.43" fill="#0a0a0a"/><rect x="2027.51" y="640.16" width="4.5" height="42.26" fill="#ffffff" stroke="#3a3a3a" stroke-width="0.6"/><rect x="2037.59" y="622.92" width="1.4" height="51.43" fill="#0a0a0a"/><rect x="2036.04" y="640.16" width="4.5" height="7.97" fill="#000000" stroke="#000" stroke-width="0.5"/><rect x="2046.12" y="614.35" width="1.4" height="42.86" fill="#0a0a0a"/><rect x="2044.22" y="648.23" width="5.2" height="0.8" fill="#555"/><rect x="2054.65" y="520.06" width="1.4" height="231.43" fill="#0a0a0a"/><rect x="2053.10" y="605.88" width="4.5" height="50.83" fill="#ffffff" stroke="#3a3a3a" stroke-width="0.6"/><rect x="2063.18" y="562.92" width="1.4" height="94.29" fill="#0a0a0a"/><rect x="2061.63" y="605.88" width="4.5" height="7.97" fill="#000000" stroke="#000" stroke-width="0.5"/><rect x="2071.71" y="605.78" width="1.4" height="60.00" fill="#0a0a0a"/><rect x="2070.16" y="605.88" width="4.5" height="42.26" fill="#000000" stroke="#000" stroke-width="0.5"/><rect x="2080.24" y="631.49" width="1.4" height="68.57" fill="#0a0a0a"/><rect x="2078.69" y="640.16" width="4.5" height="33.69" fill="#000000" stroke="#000" stroke-width="0.5"/><rect x="2088.77" y="648.63" width="1.4" height="34.29" fill="#0a0a0a"/><rect x="2086.87" y="673.95" width="5.2" height="0.8" fill="#555"/><rect x="2097.30" y="605.78" width="1.4" height="77.14" fill="#0a0a0a"/><rect x="2095.75" y="623.02" width="4.5" height="59.40" fill="#ffffff" stroke="#3a3a3a" stroke-width="0.6"/><rect x="2105.83" y="622.92" width="1.4" height="420.00" fill="#0a0a0a"/><rect x="2104.28" y="623.02" width="4.5" height="333.69" fill="#000000" stroke="#000" stroke-width="0.5"/><rect x="2114.36" y="897.21" width="1.4" height="128.57" fill="#0a0a0a"/><rect x="2112.81" y="914.45" width="4.5" height="42.26" fill="#ffffff" stroke="#3a3a3a" stroke-width="0.6"/><rect x="2122.89" y="880.06" width="1.4" height="102.86" fill="#0a0a0a"/><rect x="2121.34" y="914.45" width="4.5" height="42.26" fill="#000000" stroke="#000" stroke-width="0.5"/><rect x="2131.42" y="914.35" width="1.4" height="68.57" fill="#0a0a0a"/><rect x="2129.87" y="923.02" width="4.5" height="42.26" fill="#ffffff" stroke="#3a3a3a" stroke-width="0.6"/><rect x="2139.95" y="922.92" width="1.4" height="188.57" fill="#0a0a0a"/><rect x="2138.40" y="923.02" width="4.5" height="127.97" fill="#000000" stroke="#000" stroke-width="0.5"/><rect x="2148.48" y="905.78" width="1.4" height="162.86" fill="#0a0a0a"/><rect x="2146.93" y="923.02" width="4.5" height="136.54" fill="#ffffff" stroke="#3a3a3a" stroke-width="0.6"/><rect x="2157.01" y="828.64" width="1.4" height="111.43" fill="#0a0a0a"/><rect x="2155.46" y="845.88" width="4.5" height="59.40" fill="#ffffff" stroke="#3a3a3a" stroke-width="0.6"/><rect x="2165.54" y="725.78" width="1.4" height="180.00" fill="#0a0a0a"/><rect x="2163.99" y="751.59" width="4.5" height="85.12" fill="#ffffff" stroke="#3a3a3a" stroke-width="0.6"/><rect x="2174.07" y="742.92" width="1.4" height="137.14" fill="#0a0a0a"/><rect x="2172.52" y="743.02" width="4.5" height="119.40" fill="#000000" stroke="#000" stroke-width="0.5"/><rect x="2182.60" y="828.64" width="1.4" height="68.57" fill="#0a0a0a"/><rect x="2181.05" y="863.02" width="4.5" height="7.97" fill="#000000" stroke="#000" stroke-width="0.5"/><rect x="2191.13" y="862.92" width="1.4" height="102.86" fill="#0a0a0a"/><rect x="2189.58" y="871.59" width="4.5" height="93.69" fill="#000000" stroke="#000" stroke-width="0.5"/><rect x="2199.66" y="914.35" width="1.4" height="145.72" fill="#0a0a0a"/><rect x="2198.11" y="965.88" width="4.5" height="93.69" fill="#000000" stroke="#000" stroke-width="0.5"/><rect x="2208.19" y="1017.21" width="1.4" height="77.14" fill="#0a0a0a"/><rect x="2206.64" y="1060.17" width="4.5" height="16.54" fill="#000000" stroke="#000" stroke-width="0.5"/><rect x="2216.72" y="1051.49" width="1.4" height="85.71" fill="#0a0a0a"/><rect x="2215.17" y="1068.74" width="4.5" height="16.54" fill="#ffffff" stroke="#3a3a3a" stroke-width="0.6"/><rect x="2225.25" y="1042.92" width="1.4" height="128.57" fill="#0a0a0a"/><rect x="2223.70" y="1043.02" width="4.5" height="33.69" fill="#ffffff" stroke="#3a3a3a" stroke-width="0.6"/><rect x="2233.78" y="1008.64" width="1.4" height="77.14" fill="#0a0a0a"/><rect x="2232.23" y="1017.31" width="4.5" height="33.69" fill="#ffffff" stroke="#3a3a3a" stroke-width="0.6"/><rect x="2242.31" y="957.21" width="1.4" height="94.29" fill="#0a0a0a"/><rect x="2240.41" y="1008.24" width="5.2" height="0.8" fill="#555"/><rect x="2250.84" y="1008.64" width="1.4" height="77.14" fill="#0a0a0a"/><rect x="2249.29" y="1008.74" width="4.5" height="67.97" fill="#000000" stroke="#000" stroke-width="0.5"/><rect x="2259.37" y="1051.49" width="1.4" height="42.86" fill="#0a0a0a"/><rect x="2257.47" y="1076.81" width="5.2" height="0.8" fill="#555"/><rect x="2267.90" y="1034.35" width="1.4" height="51.43" fill="#0a0a0a"/><rect x="2266.35" y="1060.17" width="4.5" height="25.11" fill="#ffffff" stroke="#3a3a3a" stroke-width="0.6"/><rect x="2276.43" y="1051.49" width="1.4" height="94.29" fill="#0a0a0a"/><rect x="2274.88" y="1051.59" width="4.5" height="59.40" fill="#000000" stroke="#000" stroke-width="0.5"/><rect x="2284.96" y="1077.21" width="1.4" height="51.43" fill="#0a0a0a"/><rect x="2283.06" y="1102.52" width="5.2" height="0.8" fill="#555"/><rect x="2293.49" y="1060.07" width="1.4" height="60.00" fill="#0a0a0a"/><rect x="2291.94" y="1060.17" width="4.5" height="50.83" fill="#ffffff" stroke="#3a3a3a" stroke-width="0.6"/><rect x="2302.02" y="1060.07" width="1.4" height="25.71" fill="#0a0a0a"/><rect x="2300.47" y="1068.74" width="4.5" height="16.54" fill="#000000" stroke="#000" stroke-width="0.5"/><rect x="2310.55" y="1085.78" width="1.4" height="60.00" fill="#0a0a0a"/><rect x="2309.00" y="1085.88" width="4.5" height="33.69" fill="#000000" stroke="#000" stroke-width="0.5"/><rect x="2319.08" y="1025.78" width="1.4" height="111.43" fill="#0a0a0a"/><rect x="2317.53" y="1034.45" width="4.5" height="93.69" fill="#ffffff" stroke="#3a3a3a" stroke-width="0.6"/><rect x="2327.61" y="1034.35" width="1.4" height="51.43" fill="#0a0a0a"/><rect x="2326.06" y="1034.45" width="4.5" height="50.83" fill="#000000" stroke="#000" stroke-width="0.5"/><rect x="2336.14" y="1068.64" width="1.4" height="60.00" fill="#0a0a0a"/><rect x="2334.59" y="1085.88" width="4.5" height="16.54" fill="#000000" stroke="#000" stroke-width="0.5"/><rect x="2344.67" y="1060.07" width="1.4" height="51.43" fill="#0a0a0a"/><rect x="2343.12" y="1077.31" width="4.5" height="33.69" fill="#ffffff" stroke="#3a3a3a" stroke-width="0.6"/><rect x="2353.20" y="1085.78" width="1.4" height="68.57" fill="#0a0a0a"/><rect x="2351.65" y="1085.88" width="4.5" height="50.83" fill="#000000" stroke="#000" stroke-width="0.5"/><rect x="2361.73" y="1137.21" width="1.4" height="34.29" fill="#0a0a0a"/><rect x="2359.83" y="1145.38" width="5.2" height="0.8" fill="#555"/><rect x="2374.0" y="27.5" width="1.2" height="1211.30" fill="#222"/><rect x="1226.5" y="1237.6000000000001" width="1148.70" height="1.2" fill="#222"/><rect x="2374.6" y="56.70" width="4.6" height="1" fill="#222"/><rect x="2374.6" y="142.42" width="4.6" height="1" fill="#222"/><rect x="2374.6" y="228.13" width="4.6" height="1" fill="#222"/><rect x="2374.6" y="313.84" width="4.6" height="1" fill="#222"/><rect x="2374.6" y="399.56" width="4.6" height="1" fill="#222"/><rect x="2374.6" y="485.28" width="4.6" height="1" fill="#222"/><rect x="2374.6" y="570.99" width="4.6" height="1" fill="#222"/><rect x="2374.6" y="656.71" width="4.6" height="1" fill="#222"/><rect x="2374.6" y="742.42" width="4.6" height="1" fill="#222"/><rect x="2374.6" y="828.14" width="4.6" height="1" fill="#222"/><rect x="2374.6" y="913.85" width="4.6" height="1" fill="#222"/><rect x="2374.6" y="999.57" width="4.6" height="1" fill="#222"/><rect x="2374.6" y="1085.28" width="4.6" height="1" fill="#222"/><rect x="2374.6" y="1171.00" width="4.6" height="1" fill="#222"/><rect x="1329.40" y="1238.2" width="1.2" height="5.3" fill="#222"/><rect x="1414.70" y="1238.2" width="1.2" height="5.3" fill="#222"/><rect x="1500.00" y="1238.2" width="1.2" height="5.3" fill="#222"/><rect x="1585.30" y="1238.2" width="1.2" height="5.3" fill="#222"/><rect x="1670.60" y="1238.2" width="1.2" height="5.3" fill="#222"/><rect x="1755.90" y="1238.2" width="1.2" height="5.3" fill="#222"/><rect x="1841.20" y="1238.2" width="1.2" height="5.3" fill="#222"/><rect x="1926.50" y="1238.2" width="1.2" height="5.3" fill="#222"/><rect x="2011.80" y="1238.2" width="1.2" height="5.3" fill="#222"/><rect x="2097.10" y="1238.2" width="1.2" height="5.3" fill="#222"/><rect x="2182.40" y="1238.2" width="1.2" height="5.3" fill="#222"/><rect x="2267.70" y="1238.2" width="1.2" height="5.3" fill="#222"/><rect x="2353.00" y="1238.2" width="1.2" height="5.3" fill="#222"/></svg>
<div class="t" style="left:2382.4px;top:51.70px;height:13px;line-height:13px;font-size:9.1px;color:#111;">72.00</div>
<div class="t" style="left:2382.4px;top:137.42px;height:13px;line-height:13px;font-size:9.1px;color:#111;">71.90</div>
<div class="t" style="left:2382.4px;top:223.13px;height:13px;line-height:13px;font-size:9.1px;color:#111;">71.80</div>
<div class="t" style="left:2382.4px;top:308.84px;height:13px;line-height:13px;font-size:9.1px;color:#111;">71.70</div>
<div class="t" style="left:2382.4px;top:394.56px;height:13px;line-height:13px;font-size:9.1px;color:#111;">71.60</div>
<div class="t" style="left:2382.4px;top:480.28px;height:13px;line-height:13px;font-size:9.1px;color:#111;">71.50</div>
<div class="t" style="left:2382.4px;top:565.99px;height:13px;line-height:13px;font-size:9.1px;color:#111;">71.40</div>
<div class="t" style="left:2382.4px;top:651.71px;height:13px;line-height:13px;font-size:9.1px;color:#111;">71.30</div>
<div class="t" style="left:2382.4px;top:737.42px;height:13px;line-height:13px;font-size:9.1px;color:#111;">71.20</div>
<div class="t" style="left:2382.4px;top:823.14px;height:13px;line-height:13px;font-size:9.1px;color:#111;">71.10</div>
<div class="t" style="left:2382.4px;top:908.85px;height:13px;line-height:13px;font-size:9.1px;color:#111;">71.00</div>
<div class="t" style="left:2382.4px;top:994.57px;height:13px;line-height:13px;font-size:9.1px;color:#111;">70.90</div>
<div class="t" style="left:2382.4px;top:1080.28px;height:13px;line-height:13px;font-size:9.1px;color:#111;">70.80</div>
<div class="t" style="left:2382.4px;top:1166.00px;height:13px;line-height:13px;font-size:9.1px;color:#111;">70.70</div>
<div class="t" style="left:1318.6px;top:1247.80px;height:13px;line-height:13px;font-size:9.25px;color:#111;">12:30</div>
<div class="t" style="left:1403.8999999999999px;top:1247.80px;height:13px;line-height:13px;font-size:9.25px;color:#111;">12:40</div>
<div class="t" style="left:1489.1999999999998px;top:1247.80px;height:13px;line-height:13px;font-size:9.25px;color:#111;">12:50</div>
<div class="t" style="left:1574.5px;top:1247.80px;height:13px;line-height:13px;font-size:9.25px;color:#111;">13:00</div>
<div class="t" style="left:1659.7999999999997px;top:1247.80px;height:13px;line-height:13px;font-size:9.25px;color:#111;">13:10</div>
<div class="t" style="left:1745.1px;top:1247.80px;height:13px;line-height:13px;font-size:9.25px;color:#111;">13:20</div>
<div class="t" style="left:1830.3999999999999px;top:1247.80px;height:13px;line-height:13px;font-size:9.25px;color:#111;">13:30</div>
<div class="t" style="left:1915.6999999999998px;top:1247.80px;height:13px;line-height:13px;font-size:9.25px;color:#111;">13:40</div>
<div class="t" style="left:2000.9999999999998px;top:1247.80px;height:13px;line-height:13px;font-size:9.25px;color:#111;">13:50</div>
<div class="t" style="left:2086.2999999999997px;top:1247.80px;height:13px;line-height:13px;font-size:9.25px;color:#111;">14:00</div>
<div class="t" style="left:2171.6px;top:1247.80px;height:13px;line-height:13px;font-size:9.25px;color:#111;">14:10</div>
<div class="t" style="left:2256.8999999999996px;top:1247.80px;height:13px;line-height:13px;font-size:9.25px;color:#111;">14:20</div>
<div class="t" style="left:2342.2px;top:1247.80px;height:13px;line-height:13px;font-size:9.25px;color:#111;">14:30</div>
<div class="t" style="left:1231px;top:30.80px;height:13px;line-height:13px;font-size:9.2px;color:#1a1a1a;">_ADXRegionCustomColors(CL 02-24 (1 Minute),15,true,#FFFFFF00,,true,#FF0000FF,,true,#FF008000,,true,#FFFF0000,)</div>
<svg style="left:2369px;top:1138px" width="42" height="15" viewBox="0 0 42 15"><path d="M0 7.500L6 0H42V15H6z" fill="#000"/></svg>
<div class="t" style="left:2382.6px;top:1139.30px;height:13px;line-height:13px;font-size:9px;color:#fff;font-weight:bold;letter-spacing:-0.2px">70.73</div>
<div style="left:1226.5px;top:1264px;width:1184.5px;height:14px;background:#2e2e30;"></div>
<div style="left:2371px;top:1265px;width:30.5px;height:12px;background:linear-gradient(#5a5a5c,#48484a);border:1px solid #6a6a6c"></div>
<div style="left:2375px;top:1268px;width:1px;height:6px;background:#777;"></div>
<div style="left:2377px;top:1268px;width:1px;height:6px;background:#777;"></div>
<div style="left:2402px;top:1264.5px;width:8.5px;height:13px;background:#000;"></div>
<svg style="left:2404.500px;top:1268px" width="4" height="6" viewBox="0 0 4 6"><path d="M0 0l4 3-4 3z" fill="#fff"/></svg>
<div style="left:1243.5px;top:1277px;width:64px;height:21px;background:#121e2b;border:1px solid #2a6196;border-left-color:#6a88a5;border-top:none"></div>
<div class="t" style="left:1249.5px;top:1279.20px;height:16px;line-height:16px;font-size:12px;color:#4a8ed0;letter-spacing:-0.1px">CL 02-24</div>
<div style="left:1309px;top:1279px;width:17.5px;height:17.5px;background:#3e3e42;"></div>
<svg style="left:1313.500px;top:1283.500px" width="9" height="9" viewBox="0 0 9 9"><path d="M4.500 0v9M0 4.500h9" stroke="#e6e6e6" stroke-width="1.7"/></svg>
<div style="left:839px;top:241px;width:828.8px;height:1036.5px;background:#2f2f32;border:1px solid #39393c"></div>
<div style="left:840px;top:242px;width:826.8px;height:19.5px;background:#1f1f1f;"></div>
<div class="t" style="left:845.6px;top:244.00px;height:17px;line-height:17px;font-size:12.6px;color:#cdcdcd;">Indicators</div>
<div style="left:1634.5px;top:245px;width:13.5px;height:14px;background:#1f1f1f;border:1px solid #8a8a8c"><div class="t" style="left:2.6px;top:-1.00px;height:15px;line-height:15px;font-size:10.5px;color:#f0f0f0;font-weight:bold">?</div></div>
<div style="left:1650.5px;top:245px;width:14.5px;height:14px;background:#c4232d;border:1px solid #e06a70"><svg style="left:2.5px;top:2.5px" width="8" height="8" viewBox="0 0 8 8"><path d="M.5 .5l7 7M7.5 .5l-7 7" stroke="#fff" stroke-width="2.2"/></svg></div>
<div style="left:846.5px;top:268.5px;width:134.5px;height:520px;background:#323235;border:1px solid #3a3a3d"></div>
<div style="left:847.5px;top:269.5px;width:121px;height:23px;background:#1e1e1e;"></div>
<div style="left:969px;top:269.5px;width:11px;height:23px;background:#222224;"></div>
<div class="t" style="left:852.6px;top:273.80px;height:15px;line-height:15px;font-size:10.7px;color:#cfcfcf;">Available</div>
<div class="t" style="left:957px;top:272px;font-family:'Liberation Serif',serif;font-style:italic;font-weight:bold;font-size:14px;line-height:16px;color:#e4e4e4">i</div>
<svg style="left:972px;top:273.500px" width="6" height="4" viewBox="0 0 6 4"><path d="M0 4L3 .5 6 4z" fill="#e6e6e6"/></svg>
<svg style="left:972px;top:284.500px" width="6" height="4" viewBox="0 0 6 4"><path d="M0 0L3 3.500 6 0z" fill="#e6e6e6"/></svg>
<div style="left:847.5px;top:299.2px;width:120.5px;height:483.4px;overflow:hidden"><div class="t" style="left:4.5px;top:-5.90px;height:15px;line-height:15px;font-size:10.9px;color:#bfbfbf;">DM</div><div class="t" style="left:4.5px;top:10.66px;height:15px;line-height:15px;font-size:10.9px;color:#bfbfbf;">DM index</div><div class="t" style="left:4.5px;top:27.22px;height:15px;line-height:15px;font-size:10.9px;color:#bfbfbf;">DMI</div><div class="t" style="left:4.5px;top:43.78px;height:15px;line-height:15px;font-size:10.9px;color:#bfbfbf;">Donchian channel</div><div class="t" style="left:4.5px;top:60.34px;height:15px;line-height:15px;font-size:10.9px;color:#bfbfbf;">Double stochastics</div><div class="t" style="left:4.5px;top:76.90px;height:15px;line-height:15px;font-size:10.9px;color:#bfbfbf;">Drawing tool tile</div><div class="t" style="left:4.5px;top:93.46px;height:15px;line-height:15px;font-size:10.9px;color:#bfbfbf;">DrawToCurrentBarE...</div><div class="t" style="left:4.5px;top:110.02px;height:15px;line-height:15px;font-size:10.9px;color:#bfbfbf;">Ease of movement</div><div class="t" style="left:4.5px;top:126.58px;height:15px;line-height:15px;font-size:10.9px;color:#bfbfbf;">EMA</div><div class="t" style="left:4.5px;top:143.14px;height:15px;line-height:15px;font-size:10.9px;color:#bfbfbf;">Fibonacci pivots</div><div class="t" style="left:4.5px;top:159.70px;height:15px;line-height:15px;font-size:10.9px;color:#bfbfbf;">Fisher transform</div><div class="t" style="left:4.5px;top:176.26px;height:15px;line-height:15px;font-size:10.9px;color:#bfbfbf;">FOSC</div><div class="t" style="left:4.5px;top:192.82px;height:15px;line-height:15px;font-size:10.9px;color:#bfbfbf;">FX Tile</div><div class="t" style="left:4.5px;top:209.38px;height:15px;line-height:15px;font-size:10.9px;color:#bfbfbf;">HMA</div><div class="t" style="left:4.5px;top:225.94px;height:15px;line-height:15px;font-size:10.9px;color:#bfbfbf;">KAMA</div><div class="t" style="left:4.5px;top:242.50px;height:15px;line-height:15px;font-size:10.9px;color:#bfbfbf;">Keltner channel</div><div class="t" style="left:4.5px;top:259.06px;height:15px;line-height:15px;font-size:10.9px;color:#bfbfbf;">Key reversal down</div><div class="t" style="left:4.5px;top:275.62px;height:15px;line-height:15px;font-size:10.9px;color:#bfbfbf;">Key reversal up</div><div class="t" style="left:4.5px;top:292.18px;height:15px;line-height:15px;font-size:10.9px;color:#bfbfbf;">KISS Order Flow</div><div class="t" style="left:4.5px;top:308.74px;height:15px;line-height:15px;font-size:10.9px;color:#bfbfbf;">Lin. reg.</div><div class="t" style="left:4.5px;top:325.30px;height:15px;line-height:15px;font-size:10.9px;color:#bfbfbf;">Lin. reg. intercept</div><div class="t" style="left:4.5px;top:341.86px;height:15px;line-height:15px;font-size:10.9px;color:#bfbfbf;">Lin. reg. slope</div><div class="t" style="left:4.5px;top:358.42px;height:15px;line-height:15px;font-size:10.9px;color:#bfbfbf;">MA envelopes</div><div class="t" style="left:4.5px;top:374.98px;height:15px;line-height:15px;font-size:10.9px;color:#bfbfbf;">MACD</div><div class="t" style="left:4.5px;top:391.54px;height:15px;line-height:15px;font-size:10.9px;color:#bfbfbf;">MAMA</div><div class="t" style="left:4.5px;top:408.10px;height:15px;line-height:15px;font-size:10.9px;color:#bfbfbf;">MAX</div><div class="t" style="left:4.5px;top:424.66px;height:15px;line-height:15px;font-size:10.9px;color:#bfbfbf;">McClellan oscillator</div><div class="t" style="left:4.5px;top:441.22px;height:15px;line-height:15px;font-size:10.9px;color:#bfbfbf;">MFI</div><div class="t" style="left:4.5px;top:457.78px;height:15px;line-height:15px;font-size:10.9px;color:#bfbfbf;">MIN</div><div class="t" style="left:4.5px;top:474.34px;height:15px;line-height:15px;font-size:10.9px;color:#bfbfbf;">Momentum</div></div>
<div style="left:968.5px;top:293px;width:12px;height:494.5px;background:#2d2d30;"></div>
<div style="left:969px;top:498px;width:11px;height:69px;background:#3d3d40;border:1px solid #4a4a4d"></div>
<div style="left:971px;top:500px;width:7px;height:1px;background:#555;"></div>
<div style="left:846.5px;top:796.5px;width:134.5px;height:432px;background:#2f2f32;border:1px solid #3a3a3d"></div>
<div style="left:847.5px;top:797.5px;width:132.5px;height:22px;background:#1e1e1e;"></div>
<div class="t" style="left:852.6px;top:801.10px;height:15px;line-height:15px;font-size:10.7px;color:#cfcfcf;">Configured</div>
<div style="left:847.5px;top:826px;width:132.5px;height:16.5px;background:#38383b;"></div>
<div class="t" style="left:852px;top:826.90px;height:15px;line-height:15px;font-size:10.9px;color:#bfbfbf;">_ADXRegionCustomC...</div>
<div class="t" style="left:856.5px;top:1209.70px;height:15px;line-height:15px;font-size:10.6px;color:#66666a;font-style:italic">add</div>
<div class="t" style="left:883px;top:1209.70px;height:15px;line-height:15px;font-size:10.6px;color:#d8d8d8;font-style:italic">remove</div>
<div class="t" style="left:928.5px;top:1209.70px;height:15px;line-height:15px;font-size:10.6px;color:#66666a;font-style:italic">up</div>
<div class="t" style="left:949.5px;top:1209.70px;height:15px;line-height:15px;font-size:10.6px;color:#66666a;font-style:italic">down</div>
<div style="left:989px;top:268.5px;width:671.5px;height:960px;background:#2f2f32;border:1px solid #3a3a3d"></div>
<div style="left:990px;top:269.5px;width:669.5px;height:23px;background:#1e1e1e;"></div>
<div class="t" style="left:994.5px;top:273.80px;height:15px;line-height:15px;font-size:10.7px;color:#cfcfcf;">Properties</div>
<div class="t" style="left:1618.5px;top:1210.00px;height:14px;line-height:14px;font-size:9.8px;color:#d8d8d8;font-style:italic">template</div>
<div style="left:1325px;top:300px;width:1px;height:660px;background:#343437;"></div>
<svg style="left:995px;top:305.9px" width="8" height="5" viewBox="0 0 8 5"><path d="M0 0h8L4 5z" fill="#dcdcdc"/></svg>
<div class="t" style="left:1010.3px;top:302.30px;height:14px;line-height:14px;font-size:10.4px;color:#cfcfcf;font-weight:bold;letter-spacing:-0.2px">00. ADX Period</div>
<div class="t" style="left:1015.2px;top:322.10px;height:15px;line-height:15px;font-size:11px;color:#c2c2c2;word-spacing:-1.0px">ADX</div>
<div style="left:1330px;top:320.25px;width:325.5px;height:17.5px;background:#3e3e42;"></div>
<div class="t" style="left:1336px;top:321.90px;height:15px;line-height:15px;font-size:10.8px;color:#c4c4c4;">15</div>
<svg style="left:995px;top:347.6px" width="8" height="5" viewBox="0 0 8 5"><path d="M0 0h8L4 5z" fill="#dcdcdc"/></svg>
<div class="t" style="left:1010.3px;top:344.00px;height:14px;line-height:14px;font-size:10.4px;color:#cfcfcf;font-weight:bold;letter-spacing:-0.2px">01. ADX &amp; EMA Colors</div>
<div class="t" style="left:1015.2px;top:364.00px;height:15px;line-height:15px;font-size:11px;color:#c2c2c2;word-spacing:-1.0px">Rising ADX &amp; Rising EMA (Could be an uptrend)</div>
<div style="left:1330px;top:362.2px;width:325.5px;height:18px;background:#3e3e42;"></div>
<div style="left:1335px;top:366.5px;width:27px;height:9.4px;background:#008000;border:1px solid #c8e0c8"></div>
<div class="t" style="left:1368.5px;top:364.10px;height:15px;line-height:15px;font-size:10.8px;color:#c4c4c4;">Green</div>
<svg style="left:1643px;top:368.4px" width="8.6" height="5.6" viewBox="0 0 10 6.5" fill="none" stroke="#dcdcdc" stroke-width="1.9"><path d="M1 1l4 4 4-4"/></svg>
<div class="t" style="left:1015.2px;top:385.00px;height:15px;line-height:15px;font-size:11px;color:#c2c2c2;word-spacing:-1.0px">Rising ADX &amp; Falling EMA (Could be a downtrend)</div>
<div style="left:1330px;top:383.2px;width:325.5px;height:18px;background:#3e3e42;"></div>
<div style="left:1335px;top:387.5px;width:27px;height:9.4px;background:#0000f0;border:1px solid #b8b8ff"></div>
<div class="t" style="left:1368.5px;top:385.10px;height:15px;line-height:15px;font-size:10.8px;color:#c4c4c4;">Blue</div>
<svg style="left:1643px;top:389.4px" width="8.6" height="5.6" viewBox="0 0 10 6.5" fill="none" stroke="#dcdcdc" stroke-width="1.9"><path d="M1 1l4 4 4-4"/></svg>
<div class="t" style="left:1015.2px;top:406.00px;height:15px;line-height:15px;font-size:11px;color:#c2c2c2;word-spacing:-1.0px">Falling ADX and Falling EMA (Could be a slowing downtrend)</div>
<div style="left:1330px;top:404.2px;width:325.5px;height:18px;background:#3e3e42;"></div>
<div style="left:1335px;top:408.5px;width:27px;height:9.4px;background:#f01010;border:1px solid #ffb0b0"></div>
<div class="t" style="left:1368.5px;top:406.10px;height:15px;line-height:15px;font-size:10.8px;color:#c4c4c4;">Red</div>
<svg style="left:1643px;top:410.4px" width="8.6" height="5.6" viewBox="0 0 10 6.5" fill="none" stroke="#dcdcdc" stroke-width="1.9"><path d="M1 1l4 4 4-4"/></svg>
<div class="t" style="left:1015.2px;top:427.00px;height:15px;line-height:15px;font-size:11px;color:#c2c2c2;word-spacing:-1.0px">Falling ADX &amp; Rising EMA (Could be a slowing uptrend)</div>
<div style="left:1330px;top:425.2px;width:325.5px;height:18px;background:#3e3e42;"></div>
<div style="left:1335px;top:429.5px;width:27px;height:9.4px;background:#ffff00;border:1px solid #ffffc0"></div>
<div class="t" style="left:1368.5px;top:427.10px;height:15px;line-height:15px;font-size:10.8px;color:#c4c4c4;">Yellow</div>
<svg style="left:1643px;top:431.4px" width="8.6" height="5.6" viewBox="0 0 10 6.5" fill="none" stroke="#dcdcdc" stroke-width="1.9"><path d="M1 1l4 4 4-4"/></svg>
<svg style="left:995px;top:452.3px" width="8" height="5" viewBox="0 0 8 5"><path d="M0 0h8L4 5z" fill="#dcdcdc"/></svg>
<div class="t" style="left:1010.3px;top:448.70px;height:14px;line-height:14px;font-size:10.4px;color:#cfcfcf;font-weight:bold;letter-spacing:-0.2px">02. Enable ADX Regions Sounds</div>
<div class="t" style="left:1015.2px;top:468.80px;height:15px;line-height:15px;font-size:11px;color:#c2c2c2;word-spacing:-1.0px">Rising ADX and EMA Regions SoundsSwitch On/Off</div>
<svg style="left:1331.500px;top:472.0px" width="8" height="8" viewBox="0 0 8 8"><rect x="0" y="0" width="8" height="8" fill="#2a2a2d"/><path d="M1.700 4.200l1.700 1.700 3-4" fill="none" stroke="#e4e4e4" stroke-width="1.300"/></svg>
<div class="t" style="left:1015.2px;top:489.80px;height:15px;line-height:15px;font-size:11px;color:#c2c2c2;word-spacing:-1.0px">Falling ADX and Rising Regions SoundsSwitch On/Off</div>
<svg style="left:1331.500px;top:493.0px" width="8" height="8" viewBox="0 0 8 8"><rect x="0" y="0" width="8" height="8" fill="#2a2a2d"/><path d="M1.700 4.200l1.700 1.700 3-4" fill="none" stroke="#e4e4e4" stroke-width="1.300"/></svg>
<div class="t" style="left:1015.2px;top:510.80px;height:15px;line-height:15px;font-size:11px;color:#c2c2c2;word-spacing:-1.0px">Rising ADX and Falling Regions SoundsSwitch On/Off</div>
<svg style="left:1331.500px;top:514.0px" width="8" height="8" viewBox="0 0 8 8"><rect x="0" y="0" width="8" height="8" fill="#2a2a2d"/><path d="M1.700 4.200l1.700 1.700 3-4" fill="none" stroke="#e4e4e4" stroke-width="1.300"/></svg>
<div class="t" style="left:1015.2px;top:531.80px;height:15px;line-height:15px;font-size:11px;color:#c2c2c2;word-spacing:-1.0px">Falling ADX and EMA Regions SoundsSwitch On/Off</div>
<svg style="left:1331.500px;top:535.0px" width="8" height="8" viewBox="0 0 8 8"><rect x="0" y="0" width="8" height="8" fill="#2a2a2d"/><path d="M1.700 4.200l1.700 1.700 3-4" fill="none" stroke="#e4e4e4" stroke-width="1.300"/></svg>
<svg style="left:995px;top:556.9px" width="8" height="5" viewBox="0 0 8 5"><path d="M0 0h8L4 5z" fill="#dcdcdc"/></svg>
<div class="t" style="left:1010.3px;top:553.30px;height:14px;line-height:14px;font-size:10.4px;color:#cfcfcf;font-weight:bold;letter-spacing:-0.2px">03. ADX REGIONS SELECT SOUNDS</div>
<div class="t" style="left:1015.2px;top:574.10px;height:15px;line-height:15px;font-size:11px;color:#c2c2c2;word-spacing:-1.0px">Rising ADX and EMA Region Sound</div>
<div style="left:1330px;top:572.05px;width:325.5px;height:18.5px;background:#3e3e42;"></div>
<svg style="left:1643px;top:578.5px" width="8.6" height="5.6" viewBox="0 0 10 6.5" fill="none" stroke="#dcdcdc" stroke-width="1.9"><path d="M1 1l4 4 4-4"/></svg>
<div class="t" style="left:1015.2px;top:596.75px;height:15px;line-height:15px;font-size:11px;color:#c2c2c2;word-spacing:-1.0px">Falling ADX and Rising Region Sound</div>
<div style="left:1330px;top:594.6999999999999px;width:325.5px;height:18.5px;background:#3e3e42;"></div>
<svg style="left:1643px;top:601.15px" width="8.6" height="5.6" viewBox="0 0 10 6.5" fill="none" stroke="#dcdcdc" stroke-width="1.9"><path d="M1 1l4 4 4-4"/></svg>
<div class="t" style="left:1015.2px;top:619.40px;height:15px;line-height:15px;font-size:11px;color:#c2c2c2;word-spacing:-1.0px">Rising ADX and Falling EMA Region Sound</div>
<div style="left:1330px;top:617.3499999999999px;width:325.5px;height:18.5px;background:#3e3e42;"></div>
<svg style="left:1643px;top:623.8px" width="8.6" height="5.6" viewBox="0 0 10 6.5" fill="none" stroke="#dcdcdc" stroke-width="1.9"><path d="M1 1l4 4 4-4"/></svg>
<div class="t" style="left:1015.2px;top:642.05px;height:15px;line-height:15px;font-size:11px;color:#c2c2c2;word-spacing:-1.0px">Falling ADX and EMA Region Sound</div>
<div style="left:1330px;top:640.0px;width:325.5px;height:18.5px;background:#3e3e42;"></div>
<svg style="left:1643px;top:646.45px" width="8.6" height="5.6" viewBox="0 0 10 6.5" fill="none" stroke="#dcdcdc" stroke-width="1.9"><path d="M1 1l4 4 4-4"/></svg>
<svg style="left:995px;top:668.2px" width="8" height="5" viewBox="0 0 8 5"><path d="M0 0h8L4 5z" fill="#dcdcdc"/></svg>
<div class="t" style="left:1010.3px;top:664.60px;height:14px;line-height:14px;font-size:10.4px;color:#cfcfcf;font-weight:bold;letter-spacing:-0.2px">Data Series</div>
<div class="t" style="left:1015.2px;top:684.40px;height:15px;line-height:15px;font-size:11px;color:#c2c2c2;word-spacing:-1.0px">Input series</div>
<div style="left:1330px;top:682.75px;width:325.5px;height:17.5px;background:#3e3e42;"></div>
<div class="t" style="left:1336px;top:684.40px;height:15px;line-height:15px;font-size:10.8px;color:#c4c4c4;">CL 02-24 (1 Minute)</div>
<svg style="left:995px;top:709.9px" width="8" height="5" viewBox="0 0 8 5"><path d="M0 0h8L4 5z" fill="#dcdcdc"/></svg>
<div class="t" style="left:1010.3px;top:706.30px;height:14px;line-height:14px;font-size:10.4px;color:#cfcfcf;font-weight:bold;letter-spacing:-0.2px">Setup</div>
<div class="t" style="left:1015.2px;top:727.40px;height:15px;line-height:15px;font-size:11px;color:#c2c2c2;word-spacing:-1.0px">Calculate</div>
<div style="left:1330px;top:725.15px;width:325.5px;height:18.5px;background:#3e3e42;"></div>
<div class="t" style="left:1336px;top:727.30px;height:15px;line-height:15px;font-size:10.8px;color:#c4c4c4;">On bar close</div>
<svg style="left:1643px;top:731.6px" width="8.6" height="5.6" viewBox="0 0 10 6.5" fill="none" stroke="#dcdcdc" stroke-width="1.9"><path d="M1 1l4 4 4-4"/></svg>
<div class="t" style="left:1015.2px;top:749.30px;height:15px;line-height:15px;font-size:11px;color:#c2c2c2;word-spacing:-1.0px">Label</div>
<div style="left:1330px;top:747.55px;width:325.5px;height:17.5px;background:#3e3e42;"></div>
<div class="t" style="left:1336px;top:749.20px;height:15px;line-height:15px;font-size:10.8px;color:#c4c4c4;">_ADXRegionCustomColors</div>
<div class="t" style="left:1015.2px;top:771.00px;height:15px;line-height:15px;font-size:11px;color:#c2c2c2;word-spacing:-1.0px">Maximum bars look back</div>
<div style="left:1330px;top:768.75px;width:325.5px;height:18.5px;background:#3e3e42;"></div>
<div class="t" style="left:1336px;top:770.90px;height:15px;line-height:15px;font-size:10.8px;color:#c4c4c4;">256</div>
<svg style="left:1643px;top:775.2px" width="8.6" height="5.6" viewBox="0 0 10 6.5" fill="none" stroke="#dcdcdc" stroke-width="1.9"><path d="M1 1l4 4 4-4"/></svg>
<svg style="left:995px;top:796.9px" width="8" height="5" viewBox="0 0 8 5"><path d="M0 0h8L4 5z" fill="#dcdcdc"/></svg>
<div class="t" style="left:1010.3px;top:793.30px;height:14px;line-height:14px;font-size:10.4px;color:#cfcfcf;font-weight:bold;letter-spacing:-0.2px">Visual</div>
<div class="t" style="left:1015.2px;top:813.40px;height:15px;line-height:15px;font-size:11px;color:#c2c2c2;word-spacing:-1.0px">Auto scale</div>
<svg style="left:1331.500px;top:816.5px" width="8" height="8" viewBox="0 0 8 8"><rect x="0" y="0" width="8" height="8" fill="#2a2a2d"/><path d="M1.700 4.200l1.700 1.700 3-4" fill="none" stroke="#e4e4e4" stroke-width="1.300"/></svg>
<div class="t" style="left:1015.2px;top:834.30px;height:15px;line-height:15px;font-size:11px;color:#c2c2c2;word-spacing:-1.0px">Displacement</div>
<div style="left:1330px;top:832.85px;width:325.5px;height:17.5px;background:#3e3e42;"></div>
<div class="t" style="left:1336px;top:834.50px;height:15px;line-height:15px;font-size:10.8px;color:#c4c4c4;">0</div>
<div class="t" style="left:1015.2px;top:855.30px;height:15px;line-height:15px;font-size:11px;color:#c2c2c2;word-spacing:-1.0px">Display in Data Box</div>
<svg style="left:1331.500px;top:858.4px" width="8" height="8" viewBox="0 0 8 8"><rect x="0" y="0" width="8" height="8" fill="#2a2a2d"/><path d="M1.700 4.200l1.700 1.700 3-4" fill="none" stroke="#e4e4e4" stroke-width="1.300"/></svg>
<div class="t" style="left:1015.2px;top:876.20px;height:15px;line-height:15px;font-size:11px;color:#c2c2c2;word-spacing:-1.0px">Panel</div>
<div style="left:1330px;top:874.25px;width:325.5px;height:18.5px;background:#3e3e42;"></div>
<div class="t" style="left:1336px;top:876.40px;height:15px;line-height:15px;font-size:10.8px;color:#c4c4c4;">Same as input series</div>
<svg style="left:1643px;top:880.7px" width="8.6" height="5.6" viewBox="0 0 10 6.5" fill="none" stroke="#dcdcdc" stroke-width="1.9"><path d="M1 1l4 4 4-4"/></svg>
<div class="t" style="left:1015.2px;top:897.10px;height:15px;line-height:15px;font-size:11px;color:#c2c2c2;word-spacing:-1.0px">Price marker(s)</div>
<svg style="left:1331.500px;top:900.4px" width="8" height="8" viewBox="0 0 8 8"><rect x="0" y="0" width="8" height="8" fill="#2a2a2d"/><path d="M1.700 4.200l1.700 1.700 3-4" fill="none" stroke="#e4e4e4" stroke-width="1.300"/></svg>
<div class="t" style="left:1015.2px;top:919.10px;height:15px;line-height:15px;font-size:11px;color:#c2c2c2;word-spacing:-1.0px">Scale justification</div>
<div style="left:1330px;top:916.95px;width:325.5px;height:18.5px;background:#3e3e42;"></div>
<div class="t" style="left:1336px;top:919.10px;height:15px;line-height:15px;font-size:10.8px;color:#c4c4c4;">Right</div>
<svg style="left:1643px;top:923.4000000000001px" width="8.6" height="5.6" viewBox="0 0 10 6.5" fill="none" stroke="#dcdcdc" stroke-width="1.9"><path d="M1 1l4 4 4-4"/></svg>
<div class="t" style="left:1015.2px;top:940.90px;height:15px;line-height:15px;font-size:11px;color:#c2c2c2;word-spacing:-1.0px">Visible</div>
<svg style="left:1331.500px;top:944.0px" width="8" height="8" viewBox="0 0 8 8"><rect x="0" y="0" width="8" height="8" fill="#2a2a2d"/><path d="M1.700 4.200l1.700 1.700 3-4" fill="none" stroke="#e4e4e4" stroke-width="1.300"/></svg>
<div style="left:1392px;top:1247px;width:85.5px;height:23.5px;background:#2f2f32;border:1px solid #3d3d40"></div>
<div class="t" style="left:1392px;top:1247px;width:85.5px;height:23.5px;line-height:23.5px;text-align:center;font-size:13.4px;color:#d6d6d6">OK</div>
<div style="left:1484.5px;top:1247px;width:85.5px;height:23.5px;background:#2f2f32;border:1px solid #3d3d40"></div>
<div class="t" style="left:1484.5px;top:1247px;width:85.5px;height:23.5px;line-height:23.5px;text-align:center;font-size:13.4px;color:#d6d6d6">Cancel</div>
<div style="left:1577px;top:1247px;width:84.7px;height:23.5px;background:#8c8c8e;border:1px solid #9a9a9c"></div>
<div class="t" style="left:1577px;top:1247px;width:84.7px;height:23.5px;line-height:23.5px;text-align:center;font-size:13.4px;color:#6e6e70">Apply</div>
<div style="left:2411px;top:27px;width:149px;height:1275px;background:#2f2f32;"></div>
<div style="left:2417px;top:26.5px;width:67.3px;height:22.6px;background:#2f2f32;border:1px solid #3c3c3f"></div>
<div class="t" style="left:2417px;top:26.5px;width:67.3px;height:22.6px;line-height:22.6px;text-align:center;font-size:12.4px;color:#c8c8c8">Buy Mkt</div>
<div style="left:2489px;top:26.5px;width:67.3px;height:22.6px;background:#2f2f32;border:1px solid #3c3c3f"></div>
<div class="t" style="left:2489px;top:26.5px;width:67.3px;height:22.6px;line-height:22.6px;text-align:center;font-size:12.4px;color:#c8c8c8">Sell Mkt</div>
<div style="left:2417px;top:55.15px;width:67.3px;height:22.6px;background:#2f2f32;border:1px solid #3c3c3f"></div>
<div class="t" style="left:2417px;top:55.15px;width:67.3px;height:22.6px;line-height:22.6px;text-align:center;font-size:12.4px;color:#c8c8c8">Buy Ask</div>
<div style="left:2489px;top:55.15px;width:67.3px;height:22.6px;background:#2f2f32;border:1px solid #3c3c3f"></div>
<div class="t" style="left:2489px;top:55.15px;width:67.3px;height:22.6px;line-height:22.6px;text-align:center;font-size:12.4px;color:#c8c8c8">Sell Ask</div>
<div style="left:2417px;top:83.8px;width:67.3px;height:22.6px;background:#2f2f32;border:1px solid #3c3c3f"></div>
<div class="t" style="left:2417px;top:83.8px;width:67.3px;height:22.6px;line-height:22.6px;text-align:center;font-size:12.4px;color:#c8c8c8">Buy Bid</div>
<div style="left:2489px;top:83.8px;width:67.3px;height:22.6px;background:#2f2f32;border:1px solid #3c3c3f"></div>
<div class="t" style="left:2489px;top:83.8px;width:67.3px;height:22.6px;line-height:22.6px;text-align:center;font-size:12.4px;color:#c8c8c8">Sell Bid</div>
<div style="left:2417px;top:112.44999999999999px;width:67.3px;height:22.6px;background:#2f2f32;border:1px solid #3c3c3f"></div>
<div class="t" style="left:2417px;top:112.44999999999999px;width:67.3px;height:22.6px;line-height:22.6px;text-align:center;font-size:12.4px;color:#c8c8c8">Rev</div>
<div style="left:2489px;top:112.44999999999999px;width:67.3px;height:22.6px;background:#2f2f32;border:1px solid #3c3c3f"></div>
<div class="t" style="left:2489px;top:112.44999999999999px;width:67.3px;height:22.6px;line-height:22.6px;text-align:center;font-size:12.4px;color:#c8c8c8">Close</div>
<div style="left:2417px;top:142.5px;width:138.5px;height:49px;background:#1c1c1c;border:1px solid #3c3c3f"></div>
<div style="left:2485px;top:143.5px;width:1px;height:23px;background:#3c3c3f;"></div>
<div style="left:2418px;top:166.3px;width:136.5px;height:1px;background:#3c3c3f;"></div>
<div class="t" style="left:2418px;top:148px;width:67px;height:14px;line-height:14px;text-align:center;font-size:10.5px;color:#d8d8d8">Flat</div>
<div class="t" style="left:2486px;top:148px;width:68px;height:14px;line-height:14px;text-align:center;font-size:10.5px;color:#d8d8d8">Entry</div>
<div class="t" style="left:2418px;top:171.8px;width:137px;height:14px;line-height:14px;text-align:center;font-size:10.5px;color:#d8d8d8">PnL</div>
<div class="t" style="left:2417px;top:202.50px;height:15px;line-height:15px;font-size:10.5px;color:#cfcfcf;">Instrument</div>
<div class="t" style="left:2503.5px;top:202.50px;height:15px;line-height:15px;font-size:10.5px;color:#cfcfcf;">TIF</div>
<div style="left:2416.8px;top:221.5px;width:80.7px;height:17.5px;background:#8e8e90;border:1px solid #9a9a9c"></div>
<div class="t" style="left:2422.5px;top:223.00px;height:15px;line-height:15px;font-size:10.5px;color:#707074;">CL 02-24</div>
<svg style="left:2485.5px;top:227.7px" width="9" height="5.9" viewBox="0 0 10 6.5" fill="none" stroke="#6c6c70" stroke-width="1.9"><path d="M1 1l4 4 4-4"/></svg>
<div style="left:2503.5px;top:221.5px;width:52px;height:17.5px;background:#3e3e42;"></div>
<div class="t" style="left:2509px;top:223.00px;height:15px;line-height:15px;font-size:10.5px;color:#d6d6d6;">DAY</div>
<svg style="left:2543px;top:227.7px" width="9" height="5.9" viewBox="0 0 10 6.5" fill="none" stroke="#e0e0e0" stroke-width="1.9"><path d="M1 1l4 4 4-4"/></svg>
<div class="t" style="left:2417px;top:244.30px;height:15px;line-height:15px;font-size:10.5px;color:#cfcfcf;">Account</div>
<div class="t" style="left:2503.5px;top:244.30px;height:15px;line-height:15px;font-size:10.5px;color:#cfcfcf;">Order qty</div>
<div style="left:2416.8px;top:264px;width:80.7px;height:18px;background:#3e3e42;"></div>
<div class="t" style="left:2422.5px;top:265.90px;height:15px;line-height:15px;font-size:10.5px;color:#d6d6d6;">Sim101</div>
<svg style="left:2485.5px;top:270.7px" width="9" height="5.9" viewBox="0 0 10 6.5" fill="none" stroke="#e0e0e0" stroke-width="1.9"><path d="M1 1l4 4 4-4"/></svg>
<div style="left:2503.5px;top:264px;width:52px;height:18px;background:#3e3e42;"></div>
<div class="t" style="left:2512px;top:265.90px;height:15px;line-height:15px;font-size:10.5px;color:#d6d6d6;">1</div>
<svg style="left:2531.500px;top:267px" width="10" height="12" viewBox="0 0 10 12" fill="#d8d8d8"><rect x="0" y="0" width="10" height="3"/><rect x="0" y="4" width="2" height="2"/><rect x="2.700" y="4" width="2" height="2"/><rect x="5.400" y="4" width="2" height="2"/><rect x="8" y="4" width="2" height="2"/><rect x="0" y="7" width="2" height="2"/><rect x="2.700" y="7" width="2" height="2"/><rect x="5.400" y="7" width="2" height="2"/><rect x="8" y="7" width="2" height="5"/><rect x="0" y="10" width="2" height="2"/><rect x="2.700" y="10" width="2" height="2"/><rect x="5.400" y="10" width="2" height="2"/></svg>
<svg style="left:2545.500px;top:267px" width="6" height="12" viewBox="0 0 6 12" fill="none" stroke="#e0e0e0" stroke-width="1.300"><path d="M.5 4L3 1.500 5.500 4M.5 8L3 10.500 5.500 8"/></svg>
<div class="t" style="left:2417px;top:287.80px;height:15px;line-height:15px;font-size:10.5px;color:#cfcfcf;">ATM Strategy</div>
<div style="left:2416.8px;top:307.5px;width:138.7px;height:18px;background:#3e3e42;"></div>
<div class="t" style="left:2427.5px;top:309.50px;height:15px;line-height:15px;font-size:10.5px;color:#d6d6d6;">None</div>
<svg style="left:2543px;top:314.2px" width="9" height="5.9" viewBox="0 0 10 6.5" fill="none" stroke="#e0e0e0" stroke-width="1.9"><path d="M1 1l4 4 4-4"/></svg>
<div class="t" style="left:2417px;top:331.30px;height:15px;line-height:15px;font-size:10.5px;color:#cfcfcf;">A:</div>
<div class="t" style="left:2432px;top:331.30px;height:15px;line-height:15px;font-size:10.5px;color:#cfcfcf;">70.73</div>
<div class="t" style="left:2496.5px;top:331.30px;height:15px;line-height:15px;font-size:10.5px;color:#cfcfcf;">7</div>
<div class="t" style="left:2417px;top:350.50px;height:15px;line-height:15px;font-size:10.5px;color:#cfcfcf;">B:</div>
<div class="t" style="left:2432px;top:350.50px;height:15px;line-height:15px;font-size:10.5px;color:#cfcfcf;">70.72</div>
<div class="t" style="left:2496.5px;top:350.50px;height:15px;line-height:15px;font-size:10.5px;color:#cfcfcf;">17</div>
</div>
</body></html>
